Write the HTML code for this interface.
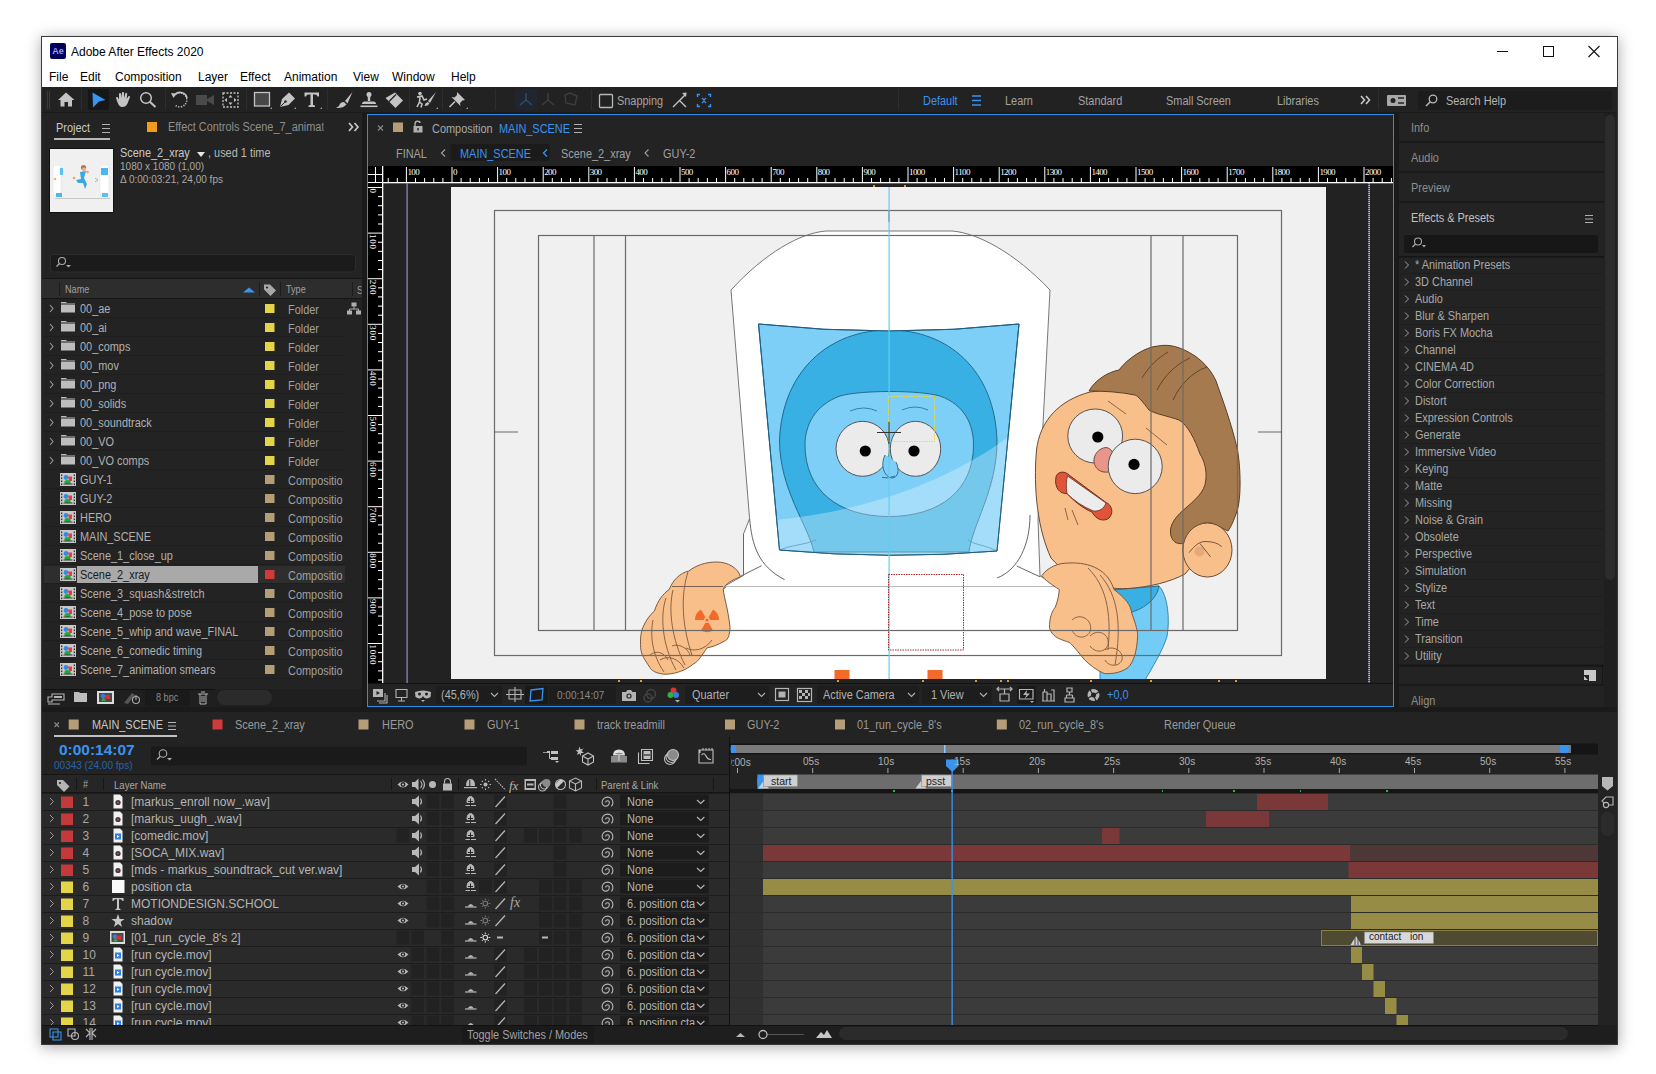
<!DOCTYPE html>
<html><head><meta charset="utf-8">
<style>
*{box-sizing:border-box;margin:0;padding:0}
html,body{width:1656px;height:1074px;overflow:hidden;background:#fff;font-family:"Liberation Sans",sans-serif}
.a{position:absolute}
.t{position:absolute;white-space:nowrap;font-size:11px;color:#a3a3a3;line-height:1;transform:scaleX(.91);transform-origin:0 0}
.n{transform:none}
#win{position:absolute;left:41px;top:36px;width:1577px;height:1009px;background:#1a1a1a;box-shadow:0 2px 14px rgba(0,0,0,.35);border:1px solid #3a3a3a}
.menu span{position:absolute;top:70px;font-size:12px;color:#000}
.pan{position:absolute;background:#232323}
</style></head><body>
<div id="win"></div>
<!-- title bar -->
<div class="a" style="left:42px;top:37px;width:1575px;height:50px;background:#fff"></div>
<div class="a" style="left:50px;top:43px;width:16px;height:16px;background:#00005b;border-radius:2px;color:#9a9aff;font-size:9px;font-weight:bold;line-height:16px;text-align:center">Ae</div>
<div class="t n" style="left:71px;top:46px;font-size:12px;color:#000">Adobe After Effects 2020</div>
<svg class="a" style="left:1480px;top:40px" width="130" height="24">
<path d="M17 11.5 H28" stroke="#111" stroke-width="1"/>
<rect x="63.5" y="6.5" width="10" height="10" fill="none" stroke="#111" stroke-width="1"/>
<path d="M108.5 6 L119.5 17 M119.5 6 L108.5 17" stroke="#111" stroke-width="1.1"/>
</svg>
<div class="menu">
<span style="left:49px">File</span><span style="left:80px">Edit</span><span style="left:115px">Composition</span><span style="left:198px">Layer</span><span style="left:240px">Effect</span><span style="left:284px">Animation</span><span style="left:353px">View</span><span style="left:392px">Window</span><span style="left:451px">Help</span>
</div>
<!-- toolbar -->
<div class="a" style="left:42px;top:87px;width:1575px;height:25px;background:#222"></div>
<svg class="a" style="left:42px;top:87px" width="1575" height="25" viewBox="42 87 1575 25">
<g fill="#3a3a3a"><rect x="47" y="91" width="1" height="18"/><rect x="49" y="91" width="1" height="18"/></g>
<g fill="#2e2e2e"><rect x="81" y="89" width="1" height="21"/><rect x="165" y="89" width="1" height="21"/><rect x="246" y="89" width="1" height="21"/><rect x="327" y="89" width="1" height="21"/><rect x="409" y="89" width="1" height="21"/><rect x="442" y="89" width="1" height="21"/><rect x="495" y="89" width="1" height="21"/><rect x="591" y="89" width="1" height="21"/><rect x="898" y="89" width="1" height="21"/><rect x="1378" y="89" width="1" height="21"/></g>
<!-- home -->
<path d="M58 100 L66 92.5 L74.5 100 L72 100 L72 106.5 L68 106.5 L68 102 L64.5 102 L64.5 106.5 L60.5 106.5 L60.5 100 Z" fill="#c4c4c4"/>
<!-- selection -->
<rect x="88" y="89" width="21" height="21" fill="#171717"/>
<path d="M92.5 92.5 L105.5 100 L99 101.5 L93 107.5 Z" fill="#3a93f0"/>
<!-- hand -->
<path d="M117 101 L116 98 Q116 96.5 117.5 97 L119 99.5 L119 93.5 Q120 92.3 121 93.5 L121.5 98 L122 92.3 Q123.2 91.5 124 92.5 L124.2 98 L125.5 93 Q126.7 92.5 127.2 93.5 L126.7 99 L128.5 96 Q130 95.8 130 97 L127.5 103.5 Q126 107 122 107 Q119 107 117 101 Z" fill="#c4c4c4"/>
<!-- zoom -->
<circle cx="146" cy="98" r="5.3" fill="none" stroke="#c4c4c4" stroke-width="1.5"/><path d="M149.8 101.8 L155.5 107" stroke="#c4c4c4" stroke-width="2"/>
<!-- rotate -->
<path d="M174 96 A7 7 0 1 1 175 105" fill="none" stroke="#c4c4c4" stroke-width="1.4" stroke-dasharray="1.3 1.3"/><path d="M174 96 A7 7 0 0 1 187 98" fill="none" stroke="#c4c4c4" stroke-width="1.6"/><path d="M171 93 L175.5 93.5 L173.5 98 Z" fill="#c4c4c4"/>
<!-- camera dim -->
<rect x="196" y="95" width="11" height="10" fill="#4a4a4a"/><path d="M207 99 L214 95 L214 105 L207 101Z" fill="#4a4a4a"/>
<!-- pan behind -->
<rect x="223" y="93" width="15" height="14" fill="none" stroke="#c4c4c4" stroke-width="1.3" stroke-dasharray="2 1.5"/><path d="M230.5 95 L228.5 97.5 L232.5 97.5Z M230.5 105 L228.5 102.5 L232.5 102.5Z M224.5 100 L227 98 L227 102Z M236.5 100 L234 98 L234 102Z" fill="#c4c4c4"/>
<!-- rect -->
<rect x="254.5" y="92.5" width="15" height="13.5" fill="#474747" stroke="#c4c4c4" stroke-width="1.3"/><path d="M270 109 L272 107 L272 109Z" fill="#999"/>
<!-- pen -->
<path d="M280 107 L282 99 L289 92.5 L295 98.5 L288.5 105 Z" fill="#c4c4c4"/><path d="M280.5 106.5 L285 102" stroke="#222" stroke-width="1"/><circle cx="285.5" cy="101.5" r="1.2" fill="#222"/><path d="M294 109 L296 107 L296 109Z" fill="#999"/>
<!-- T -->
<path d="M304.5 92.5 H319 V96.5 H317.5 Q317 94.5 315 94.5 H313 V105 L315 105.6 V107 H308.5 V105.6 L310.5 105 V94.5 H308.5 Q306.5 94.5 306 96.5 H304.5 Z" fill="#c4c4c4"/><path d="M320 109 L322 107 L322 109Z" fill="#999"/>
<!-- brush -->
<path d="M352.5 92 L345 101 L347.5 103.5 Z" fill="#c4c4c4"/><path d="M344 102 Q340 102 339 106 L336 108 Q343 108.5 346.5 104.5 Z" fill="#c4c4c4"/>
<!-- stamp -->
<circle cx="369" cy="94.5" r="2.5" fill="#c4c4c4"/><rect x="367.8" y="96" width="2.4" height="5" fill="#c4c4c4"/><path d="M362 104 Q362 101.5 364.5 101.5 H373.5 Q376 101.5 376 104 Z" fill="#c4c4c4"/><rect x="360.5" y="105.5" width="17" height="1.6" fill="#c4c4c4"/>
<!-- eraser -->
<path d="M395 92.5 L403 100.5 L395.5 108 L385.5 98 Z" fill="#c4c4c4"/><path d="M389 101.5 L396 94.5" stroke="#222" stroke-width="1.2"/>
<!-- roto -->
<circle cx="420" cy="93.5" r="1.8" fill="#c4c4c4"/><path d="M417 97 L422 96 L424 100 L427 99 M420 97 L419.5 102 L417 107 M419.5 102 L422 104 L421 107.5" stroke="#c4c4c4" stroke-width="1.6" fill="none"/><path d="M436 92 L428 101 L430 103Z M427.5 102 Q425 103 424.5 106 Q428 106 429.5 103.5Z" fill="#c4c4c4"/><path d="M436 109 L438 107 L438 109Z" fill="#999"/>
<!-- pin -->
<path d="M457 92 L465 100 L462.5 100.5 L460 103 L460.5 106 L451.5 97 L454.5 97.5 L457 95 Z" fill="#c4c4c4"/><path d="M455 101.5 L449.5 107" stroke="#c4c4c4" stroke-width="1.6"/><path d="M466 109 L468 107 L468 109Z" fill="#999"/>
<!-- dim icons -->
<rect x="515" y="89" width="22" height="21" fill="#1f2630"/>
<path d="M526 93 V100 M520 105 L526 100 L532 105" stroke="#2e4a66" stroke-width="1.6" fill="none"/>
<path d="M548 93 V100 M542 105 L548 100 L554 105" stroke="#3d3d3d" stroke-width="1.6" fill="none"/>
<path d="M565 95 L570 93 L577 96 L575 105 L566 103 Z" stroke="#3d3d3d" stroke-width="1.4" fill="none"/>
<!-- snapping -->
<rect x="599.5" y="94.5" width="13" height="13" fill="none" stroke="#b8b8b8" stroke-width="1.3" rx="1"/>
<path d="M673 107 L679.5 100.5 L686 107" stroke="#c4c4c4" stroke-width="1.4" fill="none"/><path d="M680 100 L686 94" stroke="#c4c4c4" stroke-width="1.4"/><path d="M682 93 L686.5 92.5 L686 97 Z" fill="#c4c4c4"/>
<path d="M697.5 97 V94.5 H700 M708 94.5 H710.5 V97 M710.5 104 V106.5 H708 M700 106.5 H697.5 V104" stroke="#3a93f0" stroke-width="1.4" fill="none"/><path d="M702 98 L704 100 L706 98 M702 103 L704 101 L706 103" stroke="#3a93f0" stroke-width="1.2" fill="none"/>
<!-- workspace -->
<path d="M972 96 H981 M972 100.5 H981 M972 105 H981" stroke="#3a93f0" stroke-width="1.4"/>
<path d="M1361 96 L1364.5 100 L1361 104 M1366 96 L1369.5 100 L1366 104" stroke="#c8c8c8" stroke-width="1.6" fill="none"/>
<rect x="1387" y="95" width="19" height="11" fill="#a8a8a8" rx="1"/><circle cx="1393" cy="100.5" r="2.5" fill="#222"/><path d="M1398 98 H1404 M1398 103 H1404" stroke="#222" stroke-width="1.3"/>
<rect x="1418" y="91" width="194" height="19" fill="#1c1c1c" rx="2"/>
<circle cx="1433" cy="99" r="3.8" fill="none" stroke="#b8b8b8" stroke-width="1.3"/><path d="M1430.3 101.8 L1426 106" stroke="#b8b8b8" stroke-width="1.5"/>
</svg>
<div class="t" style="left:617px;top:95px;font-size:12px;color:#a3a3a3">Snapping</div>
<div class="t" style="left:923px;top:95px;font-size:12px;color:#3a93f0">Default</div>
<div class="t" style="left:1005px;top:95px;font-size:12px;color:#a3a3a3">Learn</div>
<div class="t" style="left:1078px;top:95px;font-size:12px;color:#a3a3a3">Standard</div>
<div class="t" style="left:1166px;top:95px;font-size:12px;color:#a3a3a3">Small Screen</div>
<div class="t" style="left:1277px;top:95px;font-size:12px;color:#a3a3a3">Libraries</div>
<div class="t" style="left:1446px;top:95px;font-size:12px;color:#b3b3b3">Search Help</div>
<!-- project panel -->
<div class="pan" style="left:42px;top:113px;width:320px;height:594px"></div>
<div class="a" style="left:44px;top:566px;width:301px;height:18px;background:#2e2e2e"></div>
<div class="a" style="left:77px;top:566px;width:181px;height:18px;background:#a9a9a9"></div>
<div class="t" style="left:56px;top:122px;font-size:12px;color:#c8c8c8">Project</div>
<div class="a" style="left:54px;top:138px;width:56px;height:2px;background:#b8b8b8"></div>
<svg class="a" style="left:0;top:0" width="400" height="720">
<path d="M102 124.5 H110 M102 128.5 H110 M102 132.5 H110" stroke="#b0b0b0" stroke-width="1.2"/>
<rect x="147" y="122" width="10" height="10" fill="#f29b1d"/>
<path d="M349 123 L352.5 127 L349 131 M354.5 123 L358 127 L354.5 131" stroke="#c8c8c8" stroke-width="1.7" fill="none"/>
<rect x="49.5" y="148.5" width="64" height="64" fill="#000"/>
<rect x="50" y="149" width="63" height="63" fill="#f0f0f0"/>
<g>
<rect x="53" y="165" width="8" height="31" rx="3" fill="#fff" stroke="#ddd" stroke-width=".5"/>
<rect x="60" y="168" width="3" height="7" fill="#5cc0f0"/>
<rect x="56" y="193" width="6" height="4" fill="#4ab8f0"/>
<circle cx="55" cy="179" r="1.3" fill="#f0b090"/>
<circle cx="83.5" cy="167.5" r="2.6" fill="#b07a50"/><circle cx="84" cy="169.5" r="2" fill="#f0b090"/>
<path d="M80 172 L86 171 L84 178 L87 184 L85 189 L83 183 L78 183 L76 180 L81 179 Z" fill="#3aa8e0"/>
<circle cx="87.5" cy="172" r="1.3" fill="#f0a070"/><circle cx="74" cy="178" r="1.3" fill="#f0a070"/>
<rect x="100" y="165" width="9" height="31" rx="3" fill="#fff" stroke="#ddd" stroke-width=".5"/>
<rect x="101" y="168" width="7" height="7" fill="#4ab8f0"/>
<rect x="102" y="193" width="6" height="4" fill="#5cc0f0"/>
<path d="M95 178 L98 180 L95 182" stroke="#999" stroke-width=".7" fill="none"/>
<rect x="55" y="198" width="55" height="1" fill="#c8c8c8"/>
</g>
<path d="M197 152 H205 L201 157 Z" fill="#e8e8e8"/>
<rect x="50.5" y="254.5" width="305" height="17.5" rx="3" fill="#1b1b1b" stroke="#2c2c2c" stroke-width="1"/>
<circle cx="62" cy="261" r="3.5" fill="none" stroke="#aaa" stroke-width="1.1"/><path d="M59.5 263.5 L56.5 266.5" stroke="#aaa" stroke-width="1.2"/><path d="M66 265 H71 L68.5 267.5Z" fill="#aaa"/>
<rect x="42" y="278" width="320" height="1" fill="#151515"/><rect x="42" y="279" width="320" height="19" fill="#2d2d2d"/>
<rect x="42" y="298" width="320" height="1" fill="#151515"/>
<g fill="#1c1c1c"><rect x="59" y="282" width="1" height="14"/><rect x="259" y="282" width="1" height="14"/><rect x="280" y="282" width="1" height="14"/><rect x="352" y="282" width="1" height="14"/></g>
<path d="M243 292.5 L249 287.5 L255 292.5 Z" fill="#3a93f0"/>
<path d="M264 284.5 H270 L276 290.5 L270.5 296 L264 289.5 Z" fill="#a8a8a8"/><circle cx="267" cy="287.5" r="1.1" fill="#282828"/>
<rect x="351.5" y="302.5" width="5" height="4" fill="#b0b0b0"/><path d="M354 306.5 V309 M349.5 311 V309 H358.5 V311" stroke="#b0b0b0" stroke-width="1" fill="none"/><rect x="347" y="310.5" width="5" height="4" fill="#b0b0b0"/><rect x="356" y="310.5" width="5" height="4" fill="#b0b0b0"/>
<path d="M50 305.0 L53 308.5 L50 312.0" stroke="#9a9a9a" stroke-width="1.1" fill="none"/>
<path d="M61 302.0 H66 L67 303.0 H75 V312.5 H61 Z" fill="#bdbdbd"/><rect x="61" y="303.5" width="14" height="1" fill="#232323"/>
<rect x="265" y="304.0" width="9.5" height="9" fill="#e3d44a"/>
<path d="M50 324.0 L53 327.5 L50 331.0" stroke="#9a9a9a" stroke-width="1.1" fill="none"/>
<path d="M61 321.0 H66 L67 322.0 H75 V331.5 H61 Z" fill="#bdbdbd"/><rect x="61" y="322.5" width="14" height="1" fill="#232323"/>
<rect x="265" y="323.0" width="9.5" height="9" fill="#e3d44a"/>
<path d="M50 343.0 L53 346.5 L50 350.0" stroke="#9a9a9a" stroke-width="1.1" fill="none"/>
<path d="M61 340.0 H66 L67 341.0 H75 V350.5 H61 Z" fill="#bdbdbd"/><rect x="61" y="341.5" width="14" height="1" fill="#232323"/>
<rect x="265" y="342.0" width="9.5" height="9" fill="#e3d44a"/>
<path d="M50 362.0 L53 365.5 L50 369.0" stroke="#9a9a9a" stroke-width="1.1" fill="none"/>
<path d="M61 359.0 H66 L67 360.0 H75 V369.5 H61 Z" fill="#bdbdbd"/><rect x="61" y="360.5" width="14" height="1" fill="#232323"/>
<rect x="265" y="361.0" width="9.5" height="9" fill="#e3d44a"/>
<path d="M50 381.0 L53 384.5 L50 388.0" stroke="#9a9a9a" stroke-width="1.1" fill="none"/>
<path d="M61 378.0 H66 L67 379.0 H75 V388.5 H61 Z" fill="#bdbdbd"/><rect x="61" y="379.5" width="14" height="1" fill="#232323"/>
<rect x="265" y="380.0" width="9.5" height="9" fill="#e3d44a"/>
<path d="M50 400.0 L53 403.5 L50 407.0" stroke="#9a9a9a" stroke-width="1.1" fill="none"/>
<path d="M61 397.0 H66 L67 398.0 H75 V407.5 H61 Z" fill="#bdbdbd"/><rect x="61" y="398.5" width="14" height="1" fill="#232323"/>
<rect x="265" y="399.0" width="9.5" height="9" fill="#e3d44a"/>
<path d="M50 419.0 L53 422.5 L50 426.0" stroke="#9a9a9a" stroke-width="1.1" fill="none"/>
<path d="M61 416.0 H66 L67 417.0 H75 V426.5 H61 Z" fill="#bdbdbd"/><rect x="61" y="417.5" width="14" height="1" fill="#232323"/>
<rect x="265" y="418.0" width="9.5" height="9" fill="#e3d44a"/>
<path d="M50 438.0 L53 441.5 L50 445.0" stroke="#9a9a9a" stroke-width="1.1" fill="none"/>
<path d="M61 435.0 H66 L67 436.0 H75 V445.5 H61 Z" fill="#bdbdbd"/><rect x="61" y="436.5" width="14" height="1" fill="#232323"/>
<rect x="265" y="437.0" width="9.5" height="9" fill="#e3d44a"/>
<path d="M50 457.0 L53 460.5 L50 464.0" stroke="#9a9a9a" stroke-width="1.1" fill="none"/>
<path d="M61 454.0 H66 L67 455.0 H75 V464.5 H61 Z" fill="#bdbdbd"/><rect x="61" y="455.5" width="14" height="1" fill="#232323"/>
<rect x="265" y="456.0" width="9.5" height="9" fill="#e3d44a"/>
<rect x="60" y="473.0" width="16" height="13" fill="#c8c8c8"/><rect x="61" y="474.5" width="1.3" height="1.6" fill="#333"/><rect x="73.7" y="474.5" width="1.3" height="1.6" fill="#333"/><rect x="61" y="477.5" width="1.3" height="1.6" fill="#333"/><rect x="73.7" y="477.5" width="1.3" height="1.6" fill="#333"/><rect x="61" y="480.5" width="1.3" height="1.6" fill="#333"/><rect x="73.7" y="480.5" width="1.3" height="1.6" fill="#333"/><rect x="61" y="483.5" width="1.3" height="1.6" fill="#333"/><rect x="73.7" y="483.5" width="1.3" height="1.6" fill="#333"/><circle cx="66" cy="477.5" r="2.4" fill="#2f8ce8"/><path d="M68 476.5 H72 V481.0 L69 481.0Z" fill="#e83a4a"/><ellipse cx="67.5" cy="482.0" rx="3.2" ry="2" fill="#1fa83a"/><rect x="63.5" y="483.5" width="9" height="1" fill="#333"/>
<rect x="265" y="475.0" width="9.5" height="9" fill="#b59e77"/>
<rect x="60" y="492.0" width="16" height="13" fill="#c8c8c8"/><rect x="61" y="493.5" width="1.3" height="1.6" fill="#333"/><rect x="73.7" y="493.5" width="1.3" height="1.6" fill="#333"/><rect x="61" y="496.5" width="1.3" height="1.6" fill="#333"/><rect x="73.7" y="496.5" width="1.3" height="1.6" fill="#333"/><rect x="61" y="499.5" width="1.3" height="1.6" fill="#333"/><rect x="73.7" y="499.5" width="1.3" height="1.6" fill="#333"/><rect x="61" y="502.5" width="1.3" height="1.6" fill="#333"/><rect x="73.7" y="502.5" width="1.3" height="1.6" fill="#333"/><circle cx="66" cy="496.5" r="2.4" fill="#2f8ce8"/><path d="M68 495.5 H72 V500.0 L69 500.0Z" fill="#e83a4a"/><ellipse cx="67.5" cy="501.0" rx="3.2" ry="2" fill="#1fa83a"/><rect x="63.5" y="502.5" width="9" height="1" fill="#333"/>
<rect x="265" y="494.0" width="9.5" height="9" fill="#b59e77"/>
<rect x="60" y="511.0" width="16" height="13" fill="#c8c8c8"/><rect x="61" y="512.5" width="1.3" height="1.6" fill="#333"/><rect x="73.7" y="512.5" width="1.3" height="1.6" fill="#333"/><rect x="61" y="515.5" width="1.3" height="1.6" fill="#333"/><rect x="73.7" y="515.5" width="1.3" height="1.6" fill="#333"/><rect x="61" y="518.5" width="1.3" height="1.6" fill="#333"/><rect x="73.7" y="518.5" width="1.3" height="1.6" fill="#333"/><rect x="61" y="521.5" width="1.3" height="1.6" fill="#333"/><rect x="73.7" y="521.5" width="1.3" height="1.6" fill="#333"/><circle cx="66" cy="515.5" r="2.4" fill="#2f8ce8"/><path d="M68 514.5 H72 V519.0 L69 519.0Z" fill="#e83a4a"/><ellipse cx="67.5" cy="520.0" rx="3.2" ry="2" fill="#1fa83a"/><rect x="63.5" y="521.5" width="9" height="1" fill="#333"/>
<rect x="265" y="513.0" width="9.5" height="9" fill="#b59e77"/>
<rect x="60" y="530.0" width="16" height="13" fill="#c8c8c8"/><rect x="61" y="531.5" width="1.3" height="1.6" fill="#333"/><rect x="73.7" y="531.5" width="1.3" height="1.6" fill="#333"/><rect x="61" y="534.5" width="1.3" height="1.6" fill="#333"/><rect x="73.7" y="534.5" width="1.3" height="1.6" fill="#333"/><rect x="61" y="537.5" width="1.3" height="1.6" fill="#333"/><rect x="73.7" y="537.5" width="1.3" height="1.6" fill="#333"/><rect x="61" y="540.5" width="1.3" height="1.6" fill="#333"/><rect x="73.7" y="540.5" width="1.3" height="1.6" fill="#333"/><circle cx="66" cy="534.5" r="2.4" fill="#2f8ce8"/><path d="M68 533.5 H72 V538.0 L69 538.0Z" fill="#e83a4a"/><ellipse cx="67.5" cy="539.0" rx="3.2" ry="2" fill="#1fa83a"/><rect x="63.5" y="540.5" width="9" height="1" fill="#333"/>
<rect x="265" y="532.0" width="9.5" height="9" fill="#b59e77"/>
<rect x="60" y="549.0" width="16" height="13" fill="#c8c8c8"/><rect x="61" y="550.5" width="1.3" height="1.6" fill="#333"/><rect x="73.7" y="550.5" width="1.3" height="1.6" fill="#333"/><rect x="61" y="553.5" width="1.3" height="1.6" fill="#333"/><rect x="73.7" y="553.5" width="1.3" height="1.6" fill="#333"/><rect x="61" y="556.5" width="1.3" height="1.6" fill="#333"/><rect x="73.7" y="556.5" width="1.3" height="1.6" fill="#333"/><rect x="61" y="559.5" width="1.3" height="1.6" fill="#333"/><rect x="73.7" y="559.5" width="1.3" height="1.6" fill="#333"/><circle cx="66" cy="553.5" r="2.4" fill="#2f8ce8"/><path d="M68 552.5 H72 V557.0 L69 557.0Z" fill="#e83a4a"/><ellipse cx="67.5" cy="558.0" rx="3.2" ry="2" fill="#1fa83a"/><rect x="63.5" y="559.5" width="9" height="1" fill="#333"/>
<rect x="265" y="551.0" width="9.5" height="9" fill="#b59e77"/>
<rect x="60" y="568.0" width="16" height="13" fill="#c8c8c8"/><rect x="61" y="569.5" width="1.3" height="1.6" fill="#333"/><rect x="73.7" y="569.5" width="1.3" height="1.6" fill="#333"/><rect x="61" y="572.5" width="1.3" height="1.6" fill="#333"/><rect x="73.7" y="572.5" width="1.3" height="1.6" fill="#333"/><rect x="61" y="575.5" width="1.3" height="1.6" fill="#333"/><rect x="73.7" y="575.5" width="1.3" height="1.6" fill="#333"/><rect x="61" y="578.5" width="1.3" height="1.6" fill="#333"/><rect x="73.7" y="578.5" width="1.3" height="1.6" fill="#333"/><circle cx="66" cy="572.5" r="2.4" fill="#2f8ce8"/><path d="M68 571.5 H72 V576.0 L69 576.0Z" fill="#e83a4a"/><ellipse cx="67.5" cy="577.0" rx="3.2" ry="2" fill="#1fa83a"/><rect x="63.5" y="578.5" width="9" height="1" fill="#333"/>
<rect x="265" y="570.0" width="9.5" height="9" fill="#d03a3a"/>
<rect x="60" y="587.0" width="16" height="13" fill="#c8c8c8"/><rect x="61" y="588.5" width="1.3" height="1.6" fill="#333"/><rect x="73.7" y="588.5" width="1.3" height="1.6" fill="#333"/><rect x="61" y="591.5" width="1.3" height="1.6" fill="#333"/><rect x="73.7" y="591.5" width="1.3" height="1.6" fill="#333"/><rect x="61" y="594.5" width="1.3" height="1.6" fill="#333"/><rect x="73.7" y="594.5" width="1.3" height="1.6" fill="#333"/><rect x="61" y="597.5" width="1.3" height="1.6" fill="#333"/><rect x="73.7" y="597.5" width="1.3" height="1.6" fill="#333"/><circle cx="66" cy="591.5" r="2.4" fill="#2f8ce8"/><path d="M68 590.5 H72 V595.0 L69 595.0Z" fill="#e83a4a"/><ellipse cx="67.5" cy="596.0" rx="3.2" ry="2" fill="#1fa83a"/><rect x="63.5" y="597.5" width="9" height="1" fill="#333"/>
<rect x="265" y="589.0" width="9.5" height="9" fill="#b59e77"/>
<rect x="60" y="606.0" width="16" height="13" fill="#c8c8c8"/><rect x="61" y="607.5" width="1.3" height="1.6" fill="#333"/><rect x="73.7" y="607.5" width="1.3" height="1.6" fill="#333"/><rect x="61" y="610.5" width="1.3" height="1.6" fill="#333"/><rect x="73.7" y="610.5" width="1.3" height="1.6" fill="#333"/><rect x="61" y="613.5" width="1.3" height="1.6" fill="#333"/><rect x="73.7" y="613.5" width="1.3" height="1.6" fill="#333"/><rect x="61" y="616.5" width="1.3" height="1.6" fill="#333"/><rect x="73.7" y="616.5" width="1.3" height="1.6" fill="#333"/><circle cx="66" cy="610.5" r="2.4" fill="#2f8ce8"/><path d="M68 609.5 H72 V614.0 L69 614.0Z" fill="#e83a4a"/><ellipse cx="67.5" cy="615.0" rx="3.2" ry="2" fill="#1fa83a"/><rect x="63.5" y="616.5" width="9" height="1" fill="#333"/>
<rect x="265" y="608.0" width="9.5" height="9" fill="#b59e77"/>
<rect x="60" y="625.0" width="16" height="13" fill="#c8c8c8"/><rect x="61" y="626.5" width="1.3" height="1.6" fill="#333"/><rect x="73.7" y="626.5" width="1.3" height="1.6" fill="#333"/><rect x="61" y="629.5" width="1.3" height="1.6" fill="#333"/><rect x="73.7" y="629.5" width="1.3" height="1.6" fill="#333"/><rect x="61" y="632.5" width="1.3" height="1.6" fill="#333"/><rect x="73.7" y="632.5" width="1.3" height="1.6" fill="#333"/><rect x="61" y="635.5" width="1.3" height="1.6" fill="#333"/><rect x="73.7" y="635.5" width="1.3" height="1.6" fill="#333"/><circle cx="66" cy="629.5" r="2.4" fill="#2f8ce8"/><path d="M68 628.5 H72 V633.0 L69 633.0Z" fill="#e83a4a"/><ellipse cx="67.5" cy="634.0" rx="3.2" ry="2" fill="#1fa83a"/><rect x="63.5" y="635.5" width="9" height="1" fill="#333"/>
<rect x="265" y="627.0" width="9.5" height="9" fill="#b59e77"/>
<rect x="60" y="644.0" width="16" height="13" fill="#c8c8c8"/><rect x="61" y="645.5" width="1.3" height="1.6" fill="#333"/><rect x="73.7" y="645.5" width="1.3" height="1.6" fill="#333"/><rect x="61" y="648.5" width="1.3" height="1.6" fill="#333"/><rect x="73.7" y="648.5" width="1.3" height="1.6" fill="#333"/><rect x="61" y="651.5" width="1.3" height="1.6" fill="#333"/><rect x="73.7" y="651.5" width="1.3" height="1.6" fill="#333"/><rect x="61" y="654.5" width="1.3" height="1.6" fill="#333"/><rect x="73.7" y="654.5" width="1.3" height="1.6" fill="#333"/><circle cx="66" cy="648.5" r="2.4" fill="#2f8ce8"/><path d="M68 647.5 H72 V652.0 L69 652.0Z" fill="#e83a4a"/><ellipse cx="67.5" cy="653.0" rx="3.2" ry="2" fill="#1fa83a"/><rect x="63.5" y="654.5" width="9" height="1" fill="#333"/>
<rect x="265" y="646.0" width="9.5" height="9" fill="#b59e77"/>
<rect x="60" y="663.0" width="16" height="13" fill="#c8c8c8"/><rect x="61" y="664.5" width="1.3" height="1.6" fill="#333"/><rect x="73.7" y="664.5" width="1.3" height="1.6" fill="#333"/><rect x="61" y="667.5" width="1.3" height="1.6" fill="#333"/><rect x="73.7" y="667.5" width="1.3" height="1.6" fill="#333"/><rect x="61" y="670.5" width="1.3" height="1.6" fill="#333"/><rect x="73.7" y="670.5" width="1.3" height="1.6" fill="#333"/><rect x="61" y="673.5" width="1.3" height="1.6" fill="#333"/><rect x="73.7" y="673.5" width="1.3" height="1.6" fill="#333"/><circle cx="66" cy="667.5" r="2.4" fill="#2f8ce8"/><path d="M68 666.5 H72 V671.0 L69 671.0Z" fill="#e83a4a"/><ellipse cx="67.5" cy="672.0" rx="3.2" ry="2" fill="#1fa83a"/><rect x="63.5" y="673.5" width="9" height="1" fill="#333"/>
<rect x="265" y="665.0" width="9.5" height="9" fill="#b59e77"/>
<rect x="42" y="689" width="320" height="18" fill="#1f1f1f"/>
<rect x="44" y="689" width="171" height="1" fill="#111"/>
<path d="M48 697 H52 V694 H64 V700 H52 V702 H48 Z M48 704 H60" stroke="#b4b4b4" stroke-width="1.1" fill="none"/><rect x="54" y="696" width="8" height="2" fill="#b4b4b4"/>
<path d="M74 692 H79 L80 693 H87 V702 H74 Z" fill="#bdbdbd"/>
<rect x="97" y="691" width="17" height="13" fill="#ddd"/><rect x="99" y="693" width="13" height="9" fill="#4a4a4a"/><circle cx="103" cy="696" r="2.3" fill="#3a7be0"/><rect x="105" y="695" width="5" height="4" fill="#d83030"/><path d="M101 701 L103.5 697 L106 701Z" fill="#2aa84a"/>
<path d="M124 703 L132 693 L135 695 L128 704Z" fill="#555"/><circle cx="136" cy="700" r="3.5" fill="none" stroke="#a8a8a8" stroke-width="1.1"/><path d="M136 695 V700" stroke="#a8a8a8" stroke-width="1.1"/>
<rect x="145" y="690" width="45" height="16" rx="2" fill="#1a1a1a"/>
<path d="M198 694 H208 M200 694 V704 H206 V694 M202 696 V702 M204 696 V702 M201 692 H205" stroke="#b4b4b4" stroke-width="1" fill="none"/>
<rect x="217" y="690" width="55" height="15" rx="7.5" fill="#2b2b2b"/>
</svg>
<div class="t" style="left:168px;top:122px;font-size:12px;color:#8e8e8e;width:171px;overflow:hidden;line-height:1.3;top:120px">Effect Controls Scene_7_animation smears</div>
<div class="t" style="left:120px;top:147px;font-size:12px;color:#c8c8c8">Scene_2_xray</div>
<div class="t" style="left:208px;top:147px;font-size:12px;color:#b8b8b8">, used 1 time</div>
<div class="t" style="left:120px;top:161px;font-size:11px;color:#a8a8a8">1080 x 1080 (1,00)</div>
<div class="t" style="left:120px;top:174px;font-size:11px;color:#a8a8a8">&Delta; 0:00:03:21, 24,00 fps</div>
<div class="t" style="left:65px;top:285px;font-size:10px;color:#a0a0a0">Name</div>
<div class="t" style="left:286px;top:285px;font-size:10px;color:#a0a0a0">Type</div><div class="t" style="left:357px;top:285px;font-size:10px;color:#a0a0a0;width:5px;overflow:hidden;line-height:1.2">S</div>
<div class="t" style="left:156px;top:693px;font-size:10px;color:#8a8a8a">8 bpc</div>
<div class="a" style="left:44px;top:317px;width:301px;height:1px;background:#1e1e1e"></div>
<div class="t" style="left:80px;top:303px;font-size:12px;color:#b0b0b0">00_ae</div>
<div class="t" style="left:288px;top:303px;font-size:12px;color:#a0a0a0;width:62px;overflow:hidden;line-height:1.2">Folder</div>
<div class="a" style="left:44px;top:336px;width:301px;height:1px;background:#1e1e1e"></div>
<div class="t" style="left:80px;top:322px;font-size:12px;color:#b0b0b0">00_ai</div>
<div class="t" style="left:288px;top:322px;font-size:12px;color:#a0a0a0;width:62px;overflow:hidden;line-height:1.2">Folder</div>
<div class="a" style="left:44px;top:355px;width:301px;height:1px;background:#1e1e1e"></div>
<div class="t" style="left:80px;top:341px;font-size:12px;color:#b0b0b0">00_comps</div>
<div class="t" style="left:288px;top:341px;font-size:12px;color:#a0a0a0;width:62px;overflow:hidden;line-height:1.2">Folder</div>
<div class="a" style="left:44px;top:374px;width:301px;height:1px;background:#1e1e1e"></div>
<div class="t" style="left:80px;top:360px;font-size:12px;color:#b0b0b0">00_mov</div>
<div class="t" style="left:288px;top:360px;font-size:12px;color:#a0a0a0;width:62px;overflow:hidden;line-height:1.2">Folder</div>
<div class="a" style="left:44px;top:393px;width:301px;height:1px;background:#1e1e1e"></div>
<div class="t" style="left:80px;top:379px;font-size:12px;color:#b0b0b0">00_png</div>
<div class="t" style="left:288px;top:379px;font-size:12px;color:#a0a0a0;width:62px;overflow:hidden;line-height:1.2">Folder</div>
<div class="a" style="left:44px;top:412px;width:301px;height:1px;background:#1e1e1e"></div>
<div class="t" style="left:80px;top:398px;font-size:12px;color:#b0b0b0">00_solids</div>
<div class="t" style="left:288px;top:398px;font-size:12px;color:#a0a0a0;width:62px;overflow:hidden;line-height:1.2">Folder</div>
<div class="a" style="left:44px;top:431px;width:301px;height:1px;background:#1e1e1e"></div>
<div class="t" style="left:80px;top:417px;font-size:12px;color:#b0b0b0">00_soundtrack</div>
<div class="t" style="left:288px;top:417px;font-size:12px;color:#a0a0a0;width:62px;overflow:hidden;line-height:1.2">Folder</div>
<div class="a" style="left:44px;top:450px;width:301px;height:1px;background:#1e1e1e"></div>
<div class="t" style="left:80px;top:436px;font-size:12px;color:#b0b0b0">00_VO</div>
<div class="t" style="left:288px;top:436px;font-size:12px;color:#a0a0a0;width:62px;overflow:hidden;line-height:1.2">Folder</div>
<div class="a" style="left:44px;top:469px;width:301px;height:1px;background:#1e1e1e"></div>
<div class="t" style="left:80px;top:455px;font-size:12px;color:#b0b0b0">00_VO comps</div>
<div class="t" style="left:288px;top:455px;font-size:12px;color:#a0a0a0;width:62px;overflow:hidden;line-height:1.2">Folder</div>
<div class="a" style="left:44px;top:488px;width:301px;height:1px;background:#1e1e1e"></div>
<div class="t" style="left:80px;top:474px;font-size:12px;color:#b0b0b0">GUY-1</div>
<div class="t" style="left:288px;top:474px;font-size:12px;color:#a0a0a0;width:62px;overflow:hidden;line-height:1.2">Compositio</div>
<div class="a" style="left:44px;top:507px;width:301px;height:1px;background:#1e1e1e"></div>
<div class="t" style="left:80px;top:493px;font-size:12px;color:#b0b0b0">GUY-2</div>
<div class="t" style="left:288px;top:493px;font-size:12px;color:#a0a0a0;width:62px;overflow:hidden;line-height:1.2">Compositio</div>
<div class="a" style="left:44px;top:526px;width:301px;height:1px;background:#1e1e1e"></div>
<div class="t" style="left:80px;top:512px;font-size:12px;color:#b0b0b0">HERO</div>
<div class="t" style="left:288px;top:512px;font-size:12px;color:#a0a0a0;width:62px;overflow:hidden;line-height:1.2">Compositio</div>
<div class="a" style="left:44px;top:545px;width:301px;height:1px;background:#1e1e1e"></div>
<div class="t" style="left:80px;top:531px;font-size:12px;color:#b0b0b0">MAIN_SCENE</div>
<div class="t" style="left:288px;top:531px;font-size:12px;color:#a0a0a0;width:62px;overflow:hidden;line-height:1.2">Compositio</div>
<div class="a" style="left:44px;top:564px;width:301px;height:1px;background:#1e1e1e"></div>
<div class="t" style="left:80px;top:550px;font-size:12px;color:#b0b0b0">Scene_1_close_up</div>
<div class="t" style="left:288px;top:550px;font-size:12px;color:#a0a0a0;width:62px;overflow:hidden;line-height:1.2">Compositio</div>
<div class="a" style="left:44px;top:583px;width:301px;height:1px;background:#1e1e1e"></div>
<div class="t" style="left:80px;top:569px;font-size:12px;color:#1a1a1a">Scene_2_xray</div>
<div class="t" style="left:288px;top:569px;font-size:12px;color:#a0a0a0;width:62px;overflow:hidden;line-height:1.2">Compositio</div>
<div class="a" style="left:44px;top:602px;width:301px;height:1px;background:#1e1e1e"></div>
<div class="t" style="left:80px;top:588px;font-size:12px;color:#b0b0b0">Scene_3_squash&amp;stretch</div>
<div class="t" style="left:288px;top:588px;font-size:12px;color:#a0a0a0;width:62px;overflow:hidden;line-height:1.2">Compositio</div>
<div class="a" style="left:44px;top:621px;width:301px;height:1px;background:#1e1e1e"></div>
<div class="t" style="left:80px;top:607px;font-size:12px;color:#b0b0b0">Scene_4_pose to pose</div>
<div class="t" style="left:288px;top:607px;font-size:12px;color:#a0a0a0;width:62px;overflow:hidden;line-height:1.2">Compositio</div>
<div class="a" style="left:44px;top:640px;width:301px;height:1px;background:#1e1e1e"></div>
<div class="t" style="left:80px;top:626px;font-size:12px;color:#b0b0b0">Scene_5_whip and wave_FINAL</div>
<div class="t" style="left:288px;top:626px;font-size:12px;color:#a0a0a0;width:62px;overflow:hidden;line-height:1.2">Compositio</div>
<div class="a" style="left:44px;top:659px;width:301px;height:1px;background:#1e1e1e"></div>
<div class="t" style="left:80px;top:645px;font-size:12px;color:#b0b0b0">Scene_6_comedic timing</div>
<div class="t" style="left:288px;top:645px;font-size:12px;color:#a0a0a0;width:62px;overflow:hidden;line-height:1.2">Compositio</div>
<div class="a" style="left:44px;top:678px;width:301px;height:1px;background:#1e1e1e"></div>
<div class="t" style="left:80px;top:664px;font-size:12px;color:#b0b0b0">Scene_7_animation smears</div>
<div class="t" style="left:288px;top:664px;font-size:12px;color:#a0a0a0;width:62px;overflow:hidden;line-height:1.2">Compositio</div>
<!-- comp panel -->
<div class="pan" style="left:367px;top:114px;width:1027px;height:593px;border:1px solid #2d8ceb"></div>
<div class="a" style="left:368px;top:183px;width:1025px;height:500px;background:#222"></div>
<svg class="a" style="left:0;top:0" width="1400" height="712">
<path d="M378 125.5 L383 130.5 M383 125.5 L378 130.5" stroke="#8a8a8a" stroke-width="1.1"/>
<rect x="393" y="122.5" width="10" height="9.5" fill="#b59e77"/>
<path d="M415 126 V124 Q415 121.3 417.5 121.3 Q420 121.3 420 123" stroke="#b0b0b0" stroke-width="1.4" fill="none"/><rect x="413.5" y="126" width="9" height="6.5" fill="#b0b0b0"/><rect x="417.3" y="128" width="1.4" height="2.5" fill="#232323"/>
<path d="M574 124.5 H582 M574 128.5 H582 M574 132.5 H582" stroke="#b0b0b0" stroke-width="1.2"/>
<path d="M445 149.5 L441.5 153 L445 156.5" stroke="#a0a0a0" stroke-width="1.1" fill="none"/>
<rect x="450.5" y="144" width="99" height="17" rx="2" fill="#1b1b1b"/>
<path d="M547 149.5 L543.5 153 L547 156.5" stroke="#3a93f0" stroke-width="1.3" fill="none"/>
<path d="M648.5 149.5 L645 153 L648.5 156.5" stroke="#a0a0a0" stroke-width="1.1" fill="none"/>
<rect x="368" y="166" width="1025" height="17" fill="#000"/>
<rect x="368" y="182" width="1025" height="1.3" fill="#fff"/>
<rect x="368" y="183" width="15" height="500" fill="#000"/>
<rect x="382" y="166" width="1.3" height="517" fill="#fff"/>
<g fill="#fff">
<rect x="368" y="174" width="14" height="1"/><rect x="375" y="167" width="1" height="15"/>
<rect x="387.7" y="178" width="1" height="4"/>
<rect x="396.8" y="178" width="1" height="4"/>
<rect x="405.9" y="167" width="1" height="15"/>
<rect x="415.0" y="178" width="1" height="4"/>
<rect x="424.1" y="178" width="1" height="4"/>
<rect x="433.3" y="178" width="1" height="4"/>
<rect x="442.4" y="178" width="1" height="4"/>
<rect x="451.5" y="167" width="1" height="15"/>
<rect x="460.6" y="178" width="1" height="4"/>
<rect x="469.7" y="178" width="1" height="4"/>
<rect x="478.9" y="178" width="1" height="4"/>
<rect x="488.0" y="178" width="1" height="4"/>
<rect x="497.1" y="167" width="1" height="15"/>
<rect x="506.2" y="178" width="1" height="4"/>
<rect x="515.3" y="178" width="1" height="4"/>
<rect x="524.5" y="178" width="1" height="4"/>
<rect x="533.6" y="178" width="1" height="4"/>
<rect x="542.7" y="167" width="1" height="15"/>
<rect x="551.8" y="178" width="1" height="4"/>
<rect x="560.9" y="178" width="1" height="4"/>
<rect x="570.1" y="178" width="1" height="4"/>
<rect x="579.2" y="178" width="1" height="4"/>
<rect x="588.3" y="167" width="1" height="15"/>
<rect x="597.4" y="178" width="1" height="4"/>
<rect x="606.5" y="178" width="1" height="4"/>
<rect x="615.7" y="178" width="1" height="4"/>
<rect x="624.8" y="178" width="1" height="4"/>
<rect x="633.9" y="167" width="1" height="15"/>
<rect x="643.0" y="178" width="1" height="4"/>
<rect x="652.1" y="178" width="1" height="4"/>
<rect x="661.3" y="178" width="1" height="4"/>
<rect x="670.4" y="178" width="1" height="4"/>
<rect x="679.5" y="167" width="1" height="15"/>
<rect x="688.6" y="178" width="1" height="4"/>
<rect x="697.7" y="178" width="1" height="4"/>
<rect x="706.9" y="178" width="1" height="4"/>
<rect x="716.0" y="178" width="1" height="4"/>
<rect x="725.1" y="167" width="1" height="15"/>
<rect x="734.2" y="178" width="1" height="4"/>
<rect x="743.3" y="178" width="1" height="4"/>
<rect x="752.5" y="178" width="1" height="4"/>
<rect x="761.6" y="178" width="1" height="4"/>
<rect x="770.7" y="167" width="1" height="15"/>
<rect x="779.8" y="178" width="1" height="4"/>
<rect x="788.9" y="178" width="1" height="4"/>
<rect x="798.1" y="178" width="1" height="4"/>
<rect x="807.2" y="178" width="1" height="4"/>
<rect x="816.3" y="167" width="1" height="15"/>
<rect x="825.4" y="178" width="1" height="4"/>
<rect x="834.5" y="178" width="1" height="4"/>
<rect x="843.7" y="178" width="1" height="4"/>
<rect x="852.8" y="178" width="1" height="4"/>
<rect x="861.9" y="167" width="1" height="15"/>
<rect x="871.0" y="178" width="1" height="4"/>
<rect x="880.1" y="178" width="1" height="4"/>
<rect x="889.3" y="178" width="1" height="4"/>
<rect x="898.4" y="178" width="1" height="4"/>
<rect x="907.5" y="167" width="1" height="15"/>
<rect x="916.6" y="178" width="1" height="4"/>
<rect x="925.7" y="178" width="1" height="4"/>
<rect x="934.9" y="178" width="1" height="4"/>
<rect x="944.0" y="178" width="1" height="4"/>
<rect x="953.1" y="167" width="1" height="15"/>
<rect x="962.2" y="178" width="1" height="4"/>
<rect x="971.3" y="178" width="1" height="4"/>
<rect x="980.5" y="178" width="1" height="4"/>
<rect x="989.6" y="178" width="1" height="4"/>
<rect x="998.7" y="167" width="1" height="15"/>
<rect x="1007.8" y="178" width="1" height="4"/>
<rect x="1016.9" y="178" width="1" height="4"/>
<rect x="1026.1" y="178" width="1" height="4"/>
<rect x="1035.2" y="178" width="1" height="4"/>
<rect x="1044.3" y="167" width="1" height="15"/>
<rect x="1053.4" y="178" width="1" height="4"/>
<rect x="1062.5" y="178" width="1" height="4"/>
<rect x="1071.7" y="178" width="1" height="4"/>
<rect x="1080.8" y="178" width="1" height="4"/>
<rect x="1089.9" y="167" width="1" height="15"/>
<rect x="1099.0" y="178" width="1" height="4"/>
<rect x="1108.1" y="178" width="1" height="4"/>
<rect x="1117.3" y="178" width="1" height="4"/>
<rect x="1126.4" y="178" width="1" height="4"/>
<rect x="1135.5" y="167" width="1" height="15"/>
<rect x="1144.6" y="178" width="1" height="4"/>
<rect x="1153.7" y="178" width="1" height="4"/>
<rect x="1162.9" y="178" width="1" height="4"/>
<rect x="1172.0" y="178" width="1" height="4"/>
<rect x="1181.1" y="167" width="1" height="15"/>
<rect x="1190.2" y="178" width="1" height="4"/>
<rect x="1199.3" y="178" width="1" height="4"/>
<rect x="1208.5" y="178" width="1" height="4"/>
<rect x="1217.6" y="178" width="1" height="4"/>
<rect x="1226.7" y="167" width="1" height="15"/>
<rect x="1235.8" y="178" width="1" height="4"/>
<rect x="1244.9" y="178" width="1" height="4"/>
<rect x="1254.1" y="178" width="1" height="4"/>
<rect x="1263.2" y="178" width="1" height="4"/>
<rect x="1272.3" y="167" width="1" height="15"/>
<rect x="1281.4" y="178" width="1" height="4"/>
<rect x="1290.5" y="178" width="1" height="4"/>
<rect x="1299.7" y="178" width="1" height="4"/>
<rect x="1308.8" y="178" width="1" height="4"/>
<rect x="1317.9" y="167" width="1" height="15"/>
<rect x="1327.0" y="178" width="1" height="4"/>
<rect x="1336.1" y="178" width="1" height="4"/>
<rect x="1345.3" y="178" width="1" height="4"/>
<rect x="1354.4" y="178" width="1" height="4"/>
<rect x="1363.5" y="167" width="1" height="15"/>
<rect x="1372.6" y="178" width="1" height="4"/>
<rect x="1381.7" y="178" width="1" height="4"/>
<rect x="1390.9" y="178" width="1" height="4"/>
<rect x="368" y="187.0" width="14" height="1"/>
<rect x="378" y="196.1" width="4" height="1"/>
<rect x="378" y="205.2" width="4" height="1"/>
<rect x="378" y="214.4" width="4" height="1"/>
<rect x="378" y="223.5" width="4" height="1"/>
<rect x="368" y="232.6" width="14" height="1"/>
<rect x="378" y="241.7" width="4" height="1"/>
<rect x="378" y="250.8" width="4" height="1"/>
<rect x="378" y="260.0" width="4" height="1"/>
<rect x="378" y="269.1" width="4" height="1"/>
<rect x="368" y="278.2" width="14" height="1"/>
<rect x="378" y="287.3" width="4" height="1"/>
<rect x="378" y="296.4" width="4" height="1"/>
<rect x="378" y="305.6" width="4" height="1"/>
<rect x="378" y="314.7" width="4" height="1"/>
<rect x="368" y="323.8" width="14" height="1"/>
<rect x="378" y="332.9" width="4" height="1"/>
<rect x="378" y="342.0" width="4" height="1"/>
<rect x="378" y="351.2" width="4" height="1"/>
<rect x="378" y="360.3" width="4" height="1"/>
<rect x="368" y="369.4" width="14" height="1"/>
<rect x="378" y="378.5" width="4" height="1"/>
<rect x="378" y="387.6" width="4" height="1"/>
<rect x="378" y="396.8" width="4" height="1"/>
<rect x="378" y="405.9" width="4" height="1"/>
<rect x="368" y="415.0" width="14" height="1"/>
<rect x="378" y="424.1" width="4" height="1"/>
<rect x="378" y="433.2" width="4" height="1"/>
<rect x="378" y="442.4" width="4" height="1"/>
<rect x="378" y="451.5" width="4" height="1"/>
<rect x="368" y="460.6" width="14" height="1"/>
<rect x="378" y="469.7" width="4" height="1"/>
<rect x="378" y="478.8" width="4" height="1"/>
<rect x="378" y="488.0" width="4" height="1"/>
<rect x="378" y="497.1" width="4" height="1"/>
<rect x="368" y="506.2" width="14" height="1"/>
<rect x="378" y="515.3" width="4" height="1"/>
<rect x="378" y="524.4" width="4" height="1"/>
<rect x="378" y="533.6" width="4" height="1"/>
<rect x="378" y="542.7" width="4" height="1"/>
<rect x="368" y="551.8" width="14" height="1"/>
<rect x="378" y="560.9" width="4" height="1"/>
<rect x="378" y="570.0" width="4" height="1"/>
<rect x="378" y="579.2" width="4" height="1"/>
<rect x="378" y="588.3" width="4" height="1"/>
<rect x="368" y="597.4" width="14" height="1"/>
<rect x="378" y="606.5" width="4" height="1"/>
<rect x="378" y="615.6" width="4" height="1"/>
<rect x="378" y="624.8" width="4" height="1"/>
<rect x="378" y="633.9" width="4" height="1"/>
<rect x="368" y="643.0" width="14" height="1"/>
<rect x="378" y="652.1" width="4" height="1"/>
<rect x="378" y="661.2" width="4" height="1"/>
<rect x="378" y="670.4" width="4" height="1"/>
<rect x="378" y="679.5" width="4" height="1"/>
</g>
<g fill="#fff" font-size="9" font-family="Liberation Serif" style="letter-spacing:-.6px">
<text x="407.4" y="174.5">100</text>
<text x="453.0" y="174.5">0</text>
<text x="498.6" y="174.5">100</text>
<text x="544.2" y="174.5">200</text>
<text x="589.8" y="174.5">300</text>
<text x="635.4" y="174.5">400</text>
<text x="681.0" y="174.5">500</text>
<text x="726.6" y="174.5">600</text>
<text x="772.2" y="174.5">700</text>
<text x="817.8" y="174.5">800</text>
<text x="863.4" y="174.5">900</text>
<text x="909.0" y="174.5">1000</text>
<text x="954.6" y="174.5">1100</text>
<text x="1000.2" y="174.5">1200</text>
<text x="1045.8" y="174.5">1300</text>
<text x="1091.4" y="174.5">1400</text>
<text x="1137.0" y="174.5">1500</text>
<text x="1182.6" y="174.5">1600</text>
<text x="1228.2" y="174.5">1700</text>
<text x="1273.8" y="174.5">1800</text>
<text x="1319.4" y="174.5">1900</text>
<text x="1365.0" y="174.5">2000</text>
<text x="370" y="194.0" transform="rotate(90 372.5 191.0)">0</text>
<text x="370" y="239.6" transform="rotate(90 372.5 236.6)">1</text>
<text x="370" y="244.8" transform="rotate(90 372.5 241.8)">0</text>
<text x="370" y="250.0" transform="rotate(90 372.5 247.0)">0</text>
<text x="370" y="285.2" transform="rotate(90 372.5 282.2)">2</text>
<text x="370" y="290.4" transform="rotate(90 372.5 287.4)">0</text>
<text x="370" y="295.6" transform="rotate(90 372.5 292.6)">0</text>
<text x="370" y="330.8" transform="rotate(90 372.5 327.8)">3</text>
<text x="370" y="336.0" transform="rotate(90 372.5 333.0)">0</text>
<text x="370" y="341.2" transform="rotate(90 372.5 338.2)">0</text>
<text x="370" y="376.4" transform="rotate(90 372.5 373.4)">4</text>
<text x="370" y="381.6" transform="rotate(90 372.5 378.6)">0</text>
<text x="370" y="386.8" transform="rotate(90 372.5 383.8)">0</text>
<text x="370" y="422.0" transform="rotate(90 372.5 419.0)">5</text>
<text x="370" y="427.2" transform="rotate(90 372.5 424.2)">0</text>
<text x="370" y="432.4" transform="rotate(90 372.5 429.4)">0</text>
<text x="370" y="467.6" transform="rotate(90 372.5 464.6)">6</text>
<text x="370" y="472.8" transform="rotate(90 372.5 469.8)">0</text>
<text x="370" y="478.0" transform="rotate(90 372.5 475.0)">0</text>
<text x="370" y="513.2" transform="rotate(90 372.5 510.2)">7</text>
<text x="370" y="518.4" transform="rotate(90 372.5 515.4)">0</text>
<text x="370" y="523.6" transform="rotate(90 372.5 520.6)">0</text>
<text x="370" y="558.8" transform="rotate(90 372.5 555.8)">8</text>
<text x="370" y="564.0" transform="rotate(90 372.5 561.0)">0</text>
<text x="370" y="569.2" transform="rotate(90 372.5 566.2)">0</text>
<text x="370" y="604.4" transform="rotate(90 372.5 601.4)">9</text>
<text x="370" y="609.6" transform="rotate(90 372.5 606.6)">0</text>
<text x="370" y="614.8" transform="rotate(90 372.5 611.8)">0</text>
<text x="370" y="650.0" transform="rotate(90 372.5 647.0)">1</text>
<text x="370" y="655.2" transform="rotate(90 372.5 652.2)">0</text>
<text x="370" y="660.4" transform="rotate(90 372.5 657.4)">0</text>
<text x="370" y="665.6" transform="rotate(90 372.5 662.6)">0</text>
</g>
<rect x="406.5" y="183" width="1.2" height="500" fill="#8f8fd0"/>
<rect x="1368.5" y="183" width="1.2" height="500" fill="#6a6a90"/><path d="M1369.1 183 V683" stroke="#e0e0f0" stroke-width="1.2" stroke-dasharray="1 1"/>
<rect x="451" y="187" width="875" height="492" fill="#f0f0f0"/>
<!-- CARTOON -->
<defs>
<clipPath id="cv"><rect x="451" y="187" width="875" height="492"/></clipPath>
<clipPath id="vis"><path d="M758.5 324 Q889 338 1019 324 L997 551 Q889 560 779.5 550 Z"/></clipPath>
</defs>
<g clip-path="url(#cv)">
<!-- body -->
<path d="M728 587 H1060 L1100 600 L1125 640 V690 H650 L700 640 L723 600 V592 Q723 587 728 587Z" fill="#fff"/><path d="M723 592 Q723 587 728 587 H1060" fill="none" stroke="#888" stroke-width="1"/>
<!-- helmet -->
<path d="M826 231 L952 231 C978 233 1015 253 1050 290 L1038 520 L1040 576 L1060 587 L723 587 L743.5 575.4 L743.5 534 L749.6 518.6 L731 290 C765 253 800 233 826 231 Z" fill="#fff" stroke="#777" stroke-width="1"/>
<path d="M726 588 H1058" stroke="#fff" stroke-width="2"/>
<g fill="none" stroke="#666" stroke-width="1">
<path d="M749.6 518.6 C752 545 758 566 784.6 579.6"/>
<path d="M1030 515 C1030 545 1018 570 997 578"/>
<path d="M740 576.6 L761.6 565.7"/><path d="M1016.7 566 L1040 576.8"/>
<path d="M743.5 534 V575"/>
</g>
<!-- visor -->
<path d="M758.5 324 Q889 338 1019 324 L997 551 Q889 560 779.5 550 Z" fill="#7dcff7" stroke="#1f5f80" stroke-width="1"/>
<g clip-path="url(#vis)">
<path d="M779.5 441 C782 370 830 330 889 330 C948 330 995 370 997 441 C997 490 972 525 969 552 L814 552 C808 525 780 490 779.5 441 Z" fill="#38b0e3" stroke="#1f6a90" stroke-width="1"/>
<path d="M840 396 C860 390 920 390 940 396 C965 405 973.5 425 973.5 445 C973.5 490 940 516.5 889 516.5 C838 516.5 805 490 805 445 C805 425 815 405 840 396 Z" fill="#7dcff7" stroke="#2a6a8a" stroke-width="1"/>
<path d="M760 521 C850 516 950 485 1020 428 L1020 570 L760 570 Z" fill="#fff" fill-opacity=".3"/>
<path d="M779.5 550 C790 545 805 545 816 540" stroke="#5aa0c0" stroke-width=".8" fill="none"/>
<path d="M997 551 C985 545 975 545 968 540" stroke="#5aa0c0" stroke-width=".8" fill="none"/>
</g>
<path d="M758.5 324 Q889 338 1019 324 L997 551 Q889 560 779.5 550 Z" fill="none" stroke="#1f5f80" stroke-width="1"/>
<!-- eyebrows -->
<path d="M850 411 Q864 405 877 411 M902 410 Q915 404 928 410" stroke="#3a7fa8" stroke-width="1" fill="none"/>
<!-- eyes -->
<ellipse cx="862.7" cy="448.8" rx="26.7" ry="27.5" fill="#ebebeb" stroke="#555" stroke-width="1"/>
<ellipse cx="915.5" cy="448.8" rx="25.2" ry="27.5" fill="#ebebeb" stroke="#555" stroke-width="1"/>
<path d="M885 455 C880 465 884 477 892 478 C898 478 900 470 896 462" fill="#7dcff7" stroke="#3a6f90" stroke-width="1"/>
<circle cx="865.3" cy="451" r="5.6" fill="#000"/>
<circle cx="914" cy="451" r="5.6" fill="#000"/>
<path d="M882 477.5 Q889 479 895 476" stroke="#3a6f90" stroke-width="1" fill="none"/>
<!-- left hand -->
<path d="M716.4 562 C728 562 738 568 740.5 576.7 C732 580 725 584 723.3 589.3 C724 598 728 608 730 627.2 C730 636 727 641 724.4 641 C718 645 712 647 707.2 647.8 C702 655 698 662 693.4 664 C686 670 676 674 666 674.2 C656 674 651 670 649.8 667.4 C645 660 641 655 640.7 647.8 C640 638 641 632 643 627.2 C646 620 650 615 654.4 611 C658 600 663 594 669.3 589.3 C673 580 680 573 688.8 571 C695 566 705 562 716.4 562Z" fill="#f9bf8a" stroke="#7a5a40" stroke-width="1"/>
<g fill="none" stroke="#7a5a40" stroke-width=".9">
<path d="M688 572 C682 590 680 620 692 655"/>
<path d="M673 590 C668 610 672 640 685 665"/>
<path d="M666 598 C660 615 662 645 676 670"/>
<path d="M653 620 C650 635 652 655 664 672"/>
<path d="M686 648 C694 652 705 650 712 640"/>
<path d="M660 660 C668 655 678 658 684 668"/>
<path d="M650 655 C656 650 664 652 668 660"/>
<path d="M672 646 C678 643 688 648 690 655"/>
</g>
<path d="M672 586.5 H723" stroke="#7a6050" stroke-width="1"/>
<g fill="#f26a2a"><path d="M704.0 620.0 L695.0 620.0 A12 12 0 0 1 701.0 609.6 L705.5 617.4 A3 3 0 0 0 704.0 620.0Z"/><path d="M708.5 617.4 L713.0 609.6 A12 12 0 0 1 719.0 620.0 L710.0 620.0 A3 3 0 0 0 708.5 617.4Z"/><path d="M708.5 622.6 L713.0 630.4 A12 12 0 0 1 701.0 630.4 L705.5 622.6 A3 3 0 0 0 708.5 622.6Z"/><circle cx="707" cy="620" r="1.6"/></g>
<rect x="834.5" y="670" width="15" height="10" fill="#f26a2a"/>
<rect x="927.5" y="670" width="15" height="10" fill="#f26a2a"/>
<!-- boy shirt -->
<path d="M1112 590 L1159 586 C1168 595 1170 620 1167 636.5 C1163 650 1152 668 1145 680 L1100 680 L1100 600 Z" fill="#72ccf6" stroke="#3a8ab0" stroke-width="1"/>
<path d="M1112 590 L1159 586 C1157 600 1142 610 1128 613 C1122 605 1116 598 1112 590Z" fill="#38b0e3" stroke="#2a7099" stroke-width="1"/>
<!-- boy face -->
<path d="M1090 392 C1060 400 1040 420 1036.5 450 C1033 490 1038 530 1051 558 C1070 580 1100 590 1128 588.5 C1150 587 1170 582 1185 574 L1222 530 L1236 450 L1215 400 C1190 385 1150 385 1090 392 Z" fill="#f9bf8a" stroke="#6a4a30" stroke-width="1"/>
<!-- hair -->
<path d="M1089 391 C1095 380 1108 372 1119 370 C1128 358 1145 347 1158 346 C1168 344 1180 346 1195 356 C1205 363 1212 372 1216 381 C1222 398 1232 425 1237.5 450 C1241 470 1241 500 1237 511 C1234 520 1231 527 1228 531 L1211.5 523 C1206 523 1203 523 1201 524 C1195 530 1188 543 1183.8 543.5 C1178 544 1173.6 543.5 1171 536 C1169 528 1172 520 1183.8 509.7 C1195 500 1205 492 1205.8 480 C1207 470 1204 460 1200 454 C1195 440 1188 425 1179 420 C1168 416 1155 414 1149 410 C1143 402 1138 396 1135 395 C1120 392 1105 391 1089 391Z" fill="#a67a4f" stroke="#5a3e25" stroke-width="1"/>
<g stroke="#5a3e25" stroke-width=".9" fill="none">
<path d="M1142 378 C1150 365 1158 358 1168 352"/><path d="M1157 390 C1165 375 1175 365 1190 358"/><path d="M1173 400 C1180 385 1192 372 1207 367"/>
</g>
<g stroke="#7a5a40" stroke-width=".9" fill="none">
<path d="M1108 401 L1126 414"/><path d="M1146 428 L1167 445"/><path d="M1065 508 L1068 520 M1072 510 L1078 525"/>
</g>
<!-- boy ear -->
<ellipse cx="1207.4" cy="550" rx="24.6" ry="27" fill="#f9bf8a" stroke="#6a4a30" stroke-width="1"/>
<circle cx="1199.5" cy="551.5" r="5" fill="#e8a878"/>
<path d="M1189 552.7 C1195 545 1200 541.5 1205 541.5 C1212 541.5 1218 543 1221.7 546.6 M1200 543.5 L1210.5 556.8" stroke="#6a4a30" stroke-width=".9" fill="none"/>
<!-- boy eyes -->
<ellipse cx="1095.2" cy="436" rx="27.4" ry="27" fill="#ebebeb" stroke="#555" stroke-width="1"/>
<circle cx="1097.8" cy="437" r="5.6" fill="#000"/>
<path d="M1106 447.5 C1099 448 1093 455 1094 462 C1095 469 1101 473 1108 472 C1113 471 1116 466 1115 460 C1114 453 1111 448 1106 447.5Z" fill="#e8968a" stroke="#7a4a40" stroke-width="1"/>
<ellipse cx="1135.2" cy="466.4" rx="27" ry="27.2" fill="#ebebeb" stroke="#555" stroke-width="1"/>
<circle cx="1134" cy="464.4" r="5.6" fill="#000"/>
<!-- mouth -->
<path d="M1056 477 C1057 472 1064 470 1069 475 L1106 502.5 C1112 505 1114 513 1109 518 C1104 522 1096 520 1092 512 C1082 508 1073 500 1067 493.5 C1060 494 1054 488 1056 477Z" fill="#e0553a" stroke="#6a3020" stroke-width="1"/>
<path d="M1067.5 476 L1106 503 C1104 509 1099 511.5 1093.5 511 C1083 507 1074 500.5 1067 493.5 C1066 487 1066 481 1067.5 476Z" fill="#ececec" stroke="#6a3020" stroke-width=".8"/>
<!-- boy hand -->
<path d="M1069 563 C1090 562 1108 570 1114 589.5 C1125 598 1131 605 1131.7 613 C1136 625 1138 632 1137.6 636.5 C1137 650 1134 662 1127.8 667.8 C1120 673 1112 674 1104.3 673.6 C1096 670 1090 665 1084.8 660 C1078 652 1073 645 1069 642.3 C1062 640 1057 638 1055.4 636.5 C1050 632 1049 628 1049.6 624.7 C1050 615 1053 610 1055.4 607 C1058 600 1059 594 1059.3 589.5 C1052 585 1045 580 1041.7 575.8 C1048 567 1058 563 1069 563Z" fill="#f9bf8a" stroke="#7a5a40" stroke-width="1"/>
<g fill="none" stroke="#7a5a40" stroke-width=".9">
<path d="M1088 568 C1105 585 1112 610 1108 650"/>
<path d="M1100 575 C1118 595 1122 625 1115 665"/>
<path d="M1072 620 C1080 612 1094 620 1090 632 C1085 640 1075 638 1072 630"/>
<path d="M1090 636 C1098 628 1110 634 1108 645 C1104 654 1094 652 1090 646"/>
<path d="M1105 650 C1112 645 1124 650 1122 660 C1118 668 1108 666 1105 660"/>
</g>
</g>
<g fill="none" stroke="#6a6a6a" stroke-width="1.2">
<rect x="494.5" y="210.5" width="787" height="445"/>
<rect x="538.5" y="235.5" width="699" height="395"/>
<path d="M594 235.5 V630.5 M625.5 235.5 V630.5 M1151 235.5 V630.5 M1183 235.5 V630.5"/>
<path d="M494.5 432 H518 M1258 432 H1281.5 M889 210.5 V222"/>
</g>
<rect x="888.5" y="187" width="1.2" height="492" fill="#5fd0f0"/>
<rect x="888.5" y="396.5" width="46" height="45" fill="none" stroke="#e8d84a" stroke-width="1" stroke-dasharray="1.5 1"/>
<path d="M877 432.5 H901 M889 422 V444" stroke="#333" stroke-width="1"/>
<rect x="888.5" y="574.5" width="75" height="75.5" fill="none" stroke="#b02a2a" stroke-width="1" stroke-dasharray="1.5 1"/>
<g fill="#e89a20"><rect x="618" y="680" width="2" height="2"/><rect x="640" y="680" width="2" height="2"/><rect x="837" y="680" width="2" height="2"/><rect x="922" y="680" width="2" height="2"/><rect x="975" y="680" width="2" height="2"/><rect x="1000" y="680" width="2" height="2"/><rect x="1007" y="680" width="2" height="2"/><rect x="1090" y="680" width="2" height="2"/><rect x="1150" y="680" width="2" height="2"/><rect x="1218" y="680" width="2" height="2"/><rect x="1235" y="680" width="2" height="2"/><rect x="873" y="185" width="2" height="2"/><rect x="904" y="185" width="2" height="2"/></g>
<rect x="368" y="683" width="1025" height="1" fill="#111"/>
<!-- comp toolbar -->
<g stroke="#b4b4b4" stroke-width="1.1" fill="none">
<path d="M377 701 H385 V693 M379 703 H387 V695"/>
<path d="M396 689.5 H407 V697.5 H396 Z M398 701 H405 M401.5 698 V701"/>
</g>
<path d="M415 692 Q423 689 431 692 L430.5 697 Q427 699.5 424 697.5 L423 696 L422 697.5 Q419 699.5 415.5 697 Z" fill="#b4b4b4"/><path d="M421 700 H425 L423 702Z" fill="#b4b4b4"/><circle cx="419.5" cy="694" r="1.5" fill="#232323"/><circle cx="426.5" cy="694" r="1.5" fill="#232323"/><rect x="373" y="689" width="10" height="8" fill="#b4b4b4"/><path d="M376.5 691 L380 693 L376.5 695Z" fill="#232323"/>
<rect x="436" y="686" width="66" height="18" rx="2" fill="#1d1d1d"/>
<path d="M491 693 L494.5 696.5 L498 693" stroke="#b0b0b0" stroke-width="1.1" fill="none"/>
<g stroke="#b4b4b4" stroke-width="1.1" fill="none"><path d="M509 690 H521 V699 H509 Z M515 687 V702 M506 694.5 H524"/></g>
<rect x="525" y="686" width="23" height="18" fill="#1a1a1a"/>
<path d="M531 690 L543 688.5 L542 700 L530 701 Z" stroke="#3a93f0" stroke-width="1.3" fill="none"/>
<rect x="549" y="686" width="67" height="18" rx="2" fill="#1d1d1d"/>
<path d="M622 692 H626 L627.5 690 H631 L632.5 692 H636 V701 H622 Z" fill="#b4b4b4"/><circle cx="629" cy="696" r="2.6" fill="#232323"/><circle cx="629" cy="696" r="1.5" fill="#b4b4b4"/>
<circle cx="651" cy="694" r="4.5" fill="none" stroke="#444" stroke-width="1.5"/><circle cx="648" cy="698" r="4" fill="none" stroke="#444" stroke-width="1.5"/>
<circle cx="673.5" cy="690.5" r="3" fill="#e03030"/><circle cx="670.5" cy="695" r="3" fill="#30b040"/><circle cx="676" cy="695" r="3" fill="#3a7be0"/><path d="M675 700 H680 L677.5 702.5Z" fill="#b0b0b0"/>
<rect x="685" y="686" width="84" height="18" rx="2" fill="#1d1d1d"/>
<path d="M758 693 L761.5 696.5 L765 693" stroke="#b0b0b0" stroke-width="1.1" fill="none"/>
<rect x="775.5" y="688.5" width="13" height="12" fill="none" stroke="#b4b4b4" stroke-width="1.2"/><rect x="778.5" y="691.5" width="7" height="6" fill="#b4b4b4"/>
<rect x="797.5" y="688.5" width="14" height="13" fill="none" stroke="#b4b4b4" stroke-width="1.2"/>
<g fill="#b4b4b4"><rect x="799" y="690" width="3" height="3"/><rect x="805" y="690" width="3" height="3"/><rect x="802" y="693" width="3" height="3"/><rect x="808" y="693" width="2" height="3"/><rect x="799" y="696" width="3" height="3"/><rect x="805" y="696" width="3" height="3"/></g>
<rect x="817" y="686" width="102" height="18" rx="2" fill="#1d1d1d"/>
<path d="M908 693 L911.5 696.5 L915 693" stroke="#b0b0b0" stroke-width="1.1" fill="none"/>
<rect x="922" y="686" width="70" height="18" rx="2" fill="#1d1d1d"/>
<path d="M980 693 L983.5 696.5 L987 693" stroke="#b0b0b0" stroke-width="1.1" fill="none"/>
<g stroke="#b4b4b4" stroke-width="1.2" fill="none">
<path d="M997 689 H1012 M999 687 L997 689 L999 691 M1010 687 L1012 689 L1010 691 M1000 694 H1009 V701 H1000 Z M1004.5 689 V694"/>
<path d="M1042 701 H1055 M1043 701 V692 H1047 V701 M1047 694 H1051 V701 M1051 690 H1054 V701 M1044.5 689 V692"/>
<path d="M1065 698 H1074 V702 H1065 Z M1067 692 H1072 V688 H1067 Z M1069.5 692 V695 M1066.5 695 H1072.5 M1066.5 695 V698 M1072.5 695 V698"/>
</g>
<rect x="1017" y="686" width="19" height="18" fill="#1a1a1a"/>
<path d="M1019.5 689.5 H1033 V699 H1019.5 Z" stroke="#b4b4b4" stroke-width="1.2" fill="none"/><path d="M1027 690 L1023 695 H1026.5 L1024.5 699 L1030 693.5 H1026.5 Z" fill="#b4b4b4"/><path d="M1030 701 H1034 L1032 703Z" fill="#b0b0b0"/>
<circle cx="1093.5" cy="695" r="6" fill="#b4b4b4"/><circle cx="1093.5" cy="695" r="2.5" fill="#232323"/><path d="M1090 689.5 L1093 695 M1099 692 L1093.5 695 M1096 701 L1093.5 695 M1088 698 L1093.5 695" stroke="#232323" stroke-width="1.1"/>
</svg>
<div class="t" style="left:432px;top:123px;font-size:12px;color:#a8a8a8">Composition</div>
<div class="t" style="left:499px;top:123px;font-size:12px;color:#3a93f0">MAIN_SCENE</div>
<div class="t" style="left:396px;top:148px;font-size:12px;color:#a0a0a0">FINAL</div>
<div class="t" style="left:460px;top:148px;font-size:12px;color:#3a93f0">MAIN_SCENE</div>
<div class="t" style="left:561px;top:148px;font-size:12px;color:#a0a0a0">Scene_2_xray</div>
<div class="t" style="left:663px;top:148px;font-size:12px;color:#a0a0a0">GUY-2</div>
<div class="t" style="left:441px;top:689px;font-size:12px;color:#b0b0b0">(45,6%)</div>
<div class="t" style="left:557px;top:690px;font-size:11px;color:#8a8a8a">0:00:14:07</div>
<div class="t" style="left:692px;top:689px;font-size:12px;color:#b0b0b0">Quarter</div>
<div class="t" style="left:823px;top:689px;font-size:12px;color:#b0b0b0">Active Camera</div>
<div class="t" style="left:931px;top:689px;font-size:12px;color:#b0b0b0">1 View</div>
<div class="t" style="left:1107px;top:689px;font-size:12px;color:#3a93f0">+0,0</div>
<!-- right panel -->
<div class="pan" style="left:1399px;top:113px;width:205px;height:594px"></div>
<div class="a" style="left:1604px;top:113px;width:13px;height:594px;background:#1f1f1f"></div>
<div class="a" style="left:1605px;top:115px;width:10px;height:465px;background:#2c2c2c;border-radius:5px"></div>
<svg class="a" style="left:0;top:0" width="1656" height="712">
<rect x="1399" y="141" width="205" height="2" fill="#1a1a1a"/>
<rect x="1399" y="171" width="205" height="2" fill="#1a1a1a"/>
<rect x="1399" y="201" width="205" height="2" fill="#1a1a1a"/>
<path d="M1585 215.5 H1593 M1585 219 H1593 M1585 222.5 H1593" stroke="#b0b0b0" stroke-width="1.1"/>
<rect x="1404" y="235" width="194" height="18" rx="2" fill="#171717"/>
<circle cx="1418" cy="241.5" r="3.5" fill="none" stroke="#aaa" stroke-width="1.1"/><path d="M1415.5 244 L1412.5 247" stroke="#aaa" stroke-width="1.2"/><path d="M1422 245 H1426 L1424 247.5Z" fill="#aaa"/>
<rect x="1399" y="256" width="205" height="1.5" fill="#151515"/>
<path d="M1405 261.5 L1408.5 265 L1405 268.5" stroke="#a0a0a0" stroke-width="1" fill="none"/>
<rect x="1401" y="273" width="202" height="1" fill="#1e1e1e"/>
<path d="M1405 278.5 L1408.5 282 L1405 285.5" stroke="#a0a0a0" stroke-width="1" fill="none"/>
<rect x="1401" y="290" width="202" height="1" fill="#1e1e1e"/>
<path d="M1405 295.5 L1408.5 299 L1405 302.5" stroke="#a0a0a0" stroke-width="1" fill="none"/>
<rect x="1401" y="307" width="202" height="1" fill="#1e1e1e"/>
<path d="M1405 312.5 L1408.5 316 L1405 319.5" stroke="#a0a0a0" stroke-width="1" fill="none"/>
<rect x="1401" y="324" width="202" height="1" fill="#1e1e1e"/>
<path d="M1405 329.5 L1408.5 333 L1405 336.5" stroke="#a0a0a0" stroke-width="1" fill="none"/>
<rect x="1401" y="341" width="202" height="1" fill="#1e1e1e"/>
<path d="M1405 346.5 L1408.5 350 L1405 353.5" stroke="#a0a0a0" stroke-width="1" fill="none"/>
<rect x="1401" y="358" width="202" height="1" fill="#1e1e1e"/>
<path d="M1405 363.5 L1408.5 367 L1405 370.5" stroke="#a0a0a0" stroke-width="1" fill="none"/>
<rect x="1401" y="375" width="202" height="1" fill="#1e1e1e"/>
<path d="M1405 380.5 L1408.5 384 L1405 387.5" stroke="#a0a0a0" stroke-width="1" fill="none"/>
<rect x="1401" y="392" width="202" height="1" fill="#1e1e1e"/>
<path d="M1405 397.5 L1408.5 401 L1405 404.5" stroke="#a0a0a0" stroke-width="1" fill="none"/>
<rect x="1401" y="409" width="202" height="1" fill="#1e1e1e"/>
<path d="M1405 414.5 L1408.5 418 L1405 421.5" stroke="#a0a0a0" stroke-width="1" fill="none"/>
<rect x="1401" y="426" width="202" height="1" fill="#1e1e1e"/>
<path d="M1405 431.5 L1408.5 435 L1405 438.5" stroke="#a0a0a0" stroke-width="1" fill="none"/>
<rect x="1401" y="443" width="202" height="1" fill="#1e1e1e"/>
<path d="M1405 448.5 L1408.5 452 L1405 455.5" stroke="#a0a0a0" stroke-width="1" fill="none"/>
<rect x="1401" y="460" width="202" height="1" fill="#1e1e1e"/>
<path d="M1405 465.5 L1408.5 469 L1405 472.5" stroke="#a0a0a0" stroke-width="1" fill="none"/>
<rect x="1401" y="477" width="202" height="1" fill="#1e1e1e"/>
<path d="M1405 482.5 L1408.5 486 L1405 489.5" stroke="#a0a0a0" stroke-width="1" fill="none"/>
<rect x="1401" y="494" width="202" height="1" fill="#1e1e1e"/>
<path d="M1405 499.5 L1408.5 503 L1405 506.5" stroke="#a0a0a0" stroke-width="1" fill="none"/>
<rect x="1401" y="511" width="202" height="1" fill="#1e1e1e"/>
<path d="M1405 516.5 L1408.5 520 L1405 523.5" stroke="#a0a0a0" stroke-width="1" fill="none"/>
<rect x="1401" y="528" width="202" height="1" fill="#1e1e1e"/>
<path d="M1405 533.5 L1408.5 537 L1405 540.5" stroke="#a0a0a0" stroke-width="1" fill="none"/>
<rect x="1401" y="545" width="202" height="1" fill="#1e1e1e"/>
<path d="M1405 550.5 L1408.5 554 L1405 557.5" stroke="#a0a0a0" stroke-width="1" fill="none"/>
<rect x="1401" y="562" width="202" height="1" fill="#1e1e1e"/>
<path d="M1405 567.5 L1408.5 571 L1405 574.5" stroke="#a0a0a0" stroke-width="1" fill="none"/>
<rect x="1401" y="579" width="202" height="1" fill="#1e1e1e"/>
<path d="M1405 584.5 L1408.5 588 L1405 591.5" stroke="#a0a0a0" stroke-width="1" fill="none"/>
<rect x="1401" y="596" width="202" height="1" fill="#1e1e1e"/>
<path d="M1405 601.5 L1408.5 605 L1405 608.5" stroke="#a0a0a0" stroke-width="1" fill="none"/>
<rect x="1401" y="613" width="202" height="1" fill="#1e1e1e"/>
<path d="M1405 618.5 L1408.5 622 L1405 625.5" stroke="#a0a0a0" stroke-width="1" fill="none"/>
<rect x="1401" y="630" width="202" height="1" fill="#1e1e1e"/>
<path d="M1405 635.5 L1408.5 639 L1405 642.5" stroke="#a0a0a0" stroke-width="1" fill="none"/>
<rect x="1401" y="647" width="202" height="1" fill="#1e1e1e"/>
<path d="M1405 652.5 L1408.5 656 L1405 659.5" stroke="#a0a0a0" stroke-width="1" fill="none"/>
<rect x="1401" y="664" width="202" height="1" fill="#1e1e1e"/>
<rect x="1399" y="665" width="205" height="1.5" fill="#151515"/>
<rect x="1602" y="665" width="1" height="19" fill="#151515"/>
<path d="M1584 670 H1596 V681 H1589 V675 H1584 Z" fill="#c8c8c8"/><path d="M1584 676 L1588 680 L1584 680Z" fill="#c8c8c8"/>
<rect x="1399" y="684" width="205" height="2" fill="#1a1a1a"/>
</svg>
<div class="t" style="left:1411px;top:122px;font-size:12px;color:#8e8e8e">Info</div>
<div class="t" style="left:1411px;top:152px;font-size:12px;color:#8e8e8e">Audio</div>
<div class="t" style="left:1411px;top:182px;font-size:12px;color:#8e8e8e">Preview</div>
<div class="t" style="left:1411px;top:212px;font-size:12px;color:#c0c0c0">Effects &amp; Presets</div>
<div class="t" style="left:1411px;top:695px;font-size:12px;color:#8e8e8e">Align</div>
<div class="t" style="left:1415px;top:259px;font-size:12px;color:#a8a8a8">* Animation Presets</div>
<div class="t" style="left:1415px;top:276px;font-size:12px;color:#a8a8a8">3D Channel</div>
<div class="t" style="left:1415px;top:293px;font-size:12px;color:#a8a8a8">Audio</div>
<div class="t" style="left:1415px;top:310px;font-size:12px;color:#a8a8a8">Blur &amp; Sharpen</div>
<div class="t" style="left:1415px;top:327px;font-size:12px;color:#a8a8a8">Boris FX Mocha</div>
<div class="t" style="left:1415px;top:344px;font-size:12px;color:#a8a8a8">Channel</div>
<div class="t" style="left:1415px;top:361px;font-size:12px;color:#a8a8a8">CINEMA 4D</div>
<div class="t" style="left:1415px;top:378px;font-size:12px;color:#a8a8a8">Color Correction</div>
<div class="t" style="left:1415px;top:395px;font-size:12px;color:#a8a8a8">Distort</div>
<div class="t" style="left:1415px;top:412px;font-size:12px;color:#a8a8a8">Expression Controls</div>
<div class="t" style="left:1415px;top:429px;font-size:12px;color:#a8a8a8">Generate</div>
<div class="t" style="left:1415px;top:446px;font-size:12px;color:#a8a8a8">Immersive Video</div>
<div class="t" style="left:1415px;top:463px;font-size:12px;color:#a8a8a8">Keying</div>
<div class="t" style="left:1415px;top:480px;font-size:12px;color:#a8a8a8">Matte</div>
<div class="t" style="left:1415px;top:497px;font-size:12px;color:#a8a8a8">Missing</div>
<div class="t" style="left:1415px;top:514px;font-size:12px;color:#a8a8a8">Noise &amp; Grain</div>
<div class="t" style="left:1415px;top:531px;font-size:12px;color:#a8a8a8">Obsolete</div>
<div class="t" style="left:1415px;top:548px;font-size:12px;color:#a8a8a8">Perspective</div>
<div class="t" style="left:1415px;top:565px;font-size:12px;color:#a8a8a8">Simulation</div>
<div class="t" style="left:1415px;top:582px;font-size:12px;color:#a8a8a8">Stylize</div>
<div class="t" style="left:1415px;top:599px;font-size:12px;color:#a8a8a8">Text</div>
<div class="t" style="left:1415px;top:616px;font-size:12px;color:#a8a8a8">Time</div>
<div class="t" style="left:1415px;top:633px;font-size:12px;color:#a8a8a8">Transition</div>
<div class="t" style="left:1415px;top:650px;font-size:12px;color:#a8a8a8">Utility</div>
<!-- timeline -->
<div class="pan" style="left:42px;top:712px;width:1575px;height:332px"></div>
<svg class="a" style="left:0;top:0" width="1656" height="1074">
<path d="M54.5 722.5 L59 727 M59 722.5 L54.5 727" stroke="#8a8a8a" stroke-width="1.1"/>
<path d="M168 722.5 H176 M168 726 H176 M168 729.5 H176" stroke="#b8b8b8" stroke-width="1.2"/>
<rect x="54" y="735" width="123" height="2" fill="#c0c0c0"/>
<rect x="68.7" y="719.5" width="10" height="10" fill="#b59e77"/>
<rect x="212.5" y="719.5" width="10" height="10" fill="#d03a3a"/>
<rect x="358.5" y="719.5" width="10" height="10" fill="#b59e77"/>
<rect x="464.5" y="719.5" width="10" height="10" fill="#b59e77"/>
<rect x="574.5" y="719.5" width="10" height="10" fill="#b59e77"/>
<rect x="725" y="719.5" width="10" height="10" fill="#b59e77"/>
<rect x="835" y="719.5" width="10" height="10" fill="#b59e77"/>
<rect x="996.8" y="719.5" width="10" height="10" fill="#b59e77"/>
<rect x="151" y="746.5" width="376" height="19" rx="2" fill="#1a1a1a"/>
<circle cx="163" cy="753.5" r="3.8" fill="none" stroke="#b0b0b0" stroke-width="1.1"/><path d="M160.3 756.2 L157 759.5" stroke="#b0b0b0" stroke-width="1.3"/><path d="M167 758 H172 L169.5 760.5Z" fill="#b0b0b0"/>
<g fill="#c0c0c0">
<path d="M543 752 H547 V751 H550 V753 H547 V752.8 H543Z"/><rect x="551" y="751" width="7" height="3"/><rect x="551" y="757" width="7" height="3"/><path d="M549.5 752 V758.5 H551" stroke="#c0c0c0" stroke-width="1" fill="none"/><path d="M555 761 H559 L557 763Z"/>
<path d="M579.5 746.5 L580.5 749.5 L583.5 748.5 L581.5 751 L584 753 L581 753 L581 756 L579.5 753.5 L577 755 L578 752 L575.5 750.5 L578.5 750Z"/>
<path d="M611 756 H627 V762.5 H611Z" fill="#8a8a8a"/><path d="M613 755.5 Q613 749.5 619 749.5 Q625 749.5 625 755.5Z" fill="#e0e0e0"/><rect x="618.3" y="752" width="1.4" height="9" fill="#c0c0c0"/><rect x="615.5" y="753" width="7" height="1.2" fill="#8a8a8a"/>
</g>
<g stroke="#c0c0c0" stroke-width="1.1" fill="none">
<path d="M582.5 756 L588 753 L593.5 756 V762 L588 765 L582.5 762Z M582.5 756 L588 759 L593.5 756 M588 759 V765"/>
<path d="M641.5 749.5 H652.5 V760.5 H641.5Z M638.5 752.5 V763.5 H649.5"/><rect x="643.5" y="751" width="7" height="8" fill="#c0c0c0" stroke="none"/><path d="M644 755 H650" stroke="#232323" stroke-width="1.2"/>
<circle cx="670" cy="759" r="5.5"/><circle cx="671.5" cy="757" r="5.5"/><circle cx="673" cy="755" r="5.5" fill="#8a8a8a"/>
<path d="M699 750 H713 V763 H699Z M700 753 V750 M703 750 V748 M706 750 V748 M709 750 V748 M712 750 V748 M701.5 755 Q704 752 706 756 Q708 760 711 759.5"/>
</g>
<rect x="42" y="774" width="687" height="1" fill="#151515"/>
<rect x="42" y="775" width="687" height="18" fill="#262626"/>
<rect x="42" y="792" width="687" height="1" fill="#151515"/>
<g fill="#161616"><rect x="76" y="778" width="1" height="12"/><rect x="103" y="778" width="1" height="12"/><rect x="391" y="778" width="1" height="12"/><rect x="458" y="778" width="1" height="12"/><rect x="596" y="778" width="1" height="12"/><rect x="713" y="778" width="1" height="12"/></g>
<path d="M57 780 H63 L69.5 786.5 L64 792 L57 785Z" fill="#b4b4b4"/><circle cx="60" cy="783" r="1.1" fill="#262626"/>
<g fill="#b8b8b8">
<path d="M397.5 784.5 Q403 778.5 408.5 784.5 Q403 790.5 397.5 784.5Z"/><circle cx="403" cy="784.5" r="2.4" fill="#262626"/><circle cx="403" cy="784.5" r="1.1"/>
<path d="M412 782 H415 L418.5 778.5 V790.5 L415 787 H412Z"/>
<circle cx="432.5" cy="784.5" r="3.5"/>
<rect x="443" y="783.5" width="9" height="7"/>
<path d="M466 786 Q466 779 470.5 779 Q475 779 475 786Z"/><rect x="464" y="787" width="13" height="1.2"/>
<circle cx="485.5" cy="784.5" r="2"/>
<path d="M524.5 779 H536 V790 H524.5Z"/>
</g>
<g stroke="#b8b8b8" stroke-width="1.1" fill="none"><path d="M420.5 781 Q423.5 784.5 420.5 788 M422.5 779.5 Q426.5 784.5 422.5 789.5"/><path d="M444.5 783.5 V781.5 Q444.5 778.5 447.5 778.5 Q450.5 778.5 450.5 781.5 V783.5"/>
<path d="M485.5 779 V780.5 M485.5 788.5 V790 M480 784.5 H481.5 M489.5 784.5 H491 M481.8 780.8 L482.8 781.8 M488.2 787.2 L489.2 788.2 M481.8 788.2 L482.8 787.2 M488.2 781.8 L489.2 780.8"/>
<path d="M495 779 L505.5 790" stroke-dasharray="1.5 1"/>
<path d="M569.5 781 L575.5 778 L581.5 781 V788 L575.5 791 L569.5 788Z M569.5 781 L575.5 784 L581.5 781 M575.5 784 V791"/><circle cx="542.5" cy="787" r="4"/><circle cx="544.5" cy="785" r="4"/><circle cx="560.5" cy="784.5" r="5"/></g>
<rect x="526" y="781" width="8.5" height="7" fill="#262626"/><rect x="527" y="783.5" width="6.5" height="2" fill="#b8b8b8"/><circle cx="546.5" cy="783" r="4" fill="#8a8a8a"/><path d="M557 788 A5 5 0 0 1 564 781 Z" fill="#c8c8c8"/>
<path d="M469.8 780 V787" stroke="#262626" stroke-width="1"/>
<text x="509" y="790" font-family="Liberation Serif" font-style="italic" font-size="13" fill="#b8b8b8">fx</text>
<rect x="42" y="793" width="687" height="17" fill="#2a2a2a"/>
<rect x="42" y="793" width="687" height="1" fill="#1c1c1c"/>
<path d="M50 798.0 L53.5 801.5 L50 805.0" stroke="#9a9a9a" stroke-width="1" fill="none"/>
<rect x="61" y="796.5" width="12" height="11.5" fill="#c43a3a"/>
<rect x="426.5" y="794.5" width="12.7" height="14" fill="#222"/>
<rect x="441.3" y="794.5" width="12.7" height="14" fill="#222"/>
<rect x="494" y="794.5" width="12.7" height="14" fill="#222"/>
<rect x="553.7" y="794.5" width="12.7" height="14" fill="#222"/>
<path d="M113.5 794.5 H120 L122.5 797 V808.5 H113.5 Z" fill="#f0f0f0"/><circle cx="118" cy="802.5" r="2.6" fill="#3a3a3a"/><circle cx="118" cy="802.5" r="1" fill="#e04040"/>
<path d="M412 799.0 H415 L419 795.5 V807.5 L415 804.0 H412Z" fill="#b8b8b8"/><path d="M420.5 798.5 Q422.5 801.5 420.5 804.5" stroke="#b8b8b8" stroke-width="1.1" fill="none"/>
<path d="M465.5 805.5 H476 M467 802.5 Q467 796.5 470.5 796.5 Q474 796.5 474 802.5Z" fill="#b8b8b8" stroke="#b8b8b8" stroke-width="1"/><path d="M470.5 798.5 V806.5 M468 801.5 H473" stroke="#272727" stroke-width="1"/>
<path d="M495.5 807.0 L505 796.5" stroke="#b8b8b8" stroke-width="1.2"/>
<path d="M607.5 802.5 m-1.8 0 a1.8 1.8 0 1 1 3.6 0 a3.6 3.6 0 1 1 -7.2 0 a5.4 5.4 0 1 1 10.8 0 a5.4 5.4 0 0 1 -1.5 3.8" stroke="#b8b8b8" stroke-width="1.1" fill="none"/>
<rect x="620" y="794.5" width="88.7" height="14" fill="#1c1c1c"/>
<path d="M697 800.0 L700.7 803.5 L704.4 800.0" stroke="#b8b8b8" stroke-width="1.1" fill="none"/>
<rect x="42" y="810" width="687" height="17" fill="#2a2a2a"/>
<rect x="42" y="810" width="687" height="1" fill="#1c1c1c"/>
<path d="M50 815.0 L53.5 818.5 L50 822.0" stroke="#9a9a9a" stroke-width="1" fill="none"/>
<rect x="61" y="813.5" width="12" height="11.5" fill="#c43a3a"/>
<rect x="426.5" y="811.5" width="12.7" height="14" fill="#222"/>
<rect x="441.3" y="811.5" width="12.7" height="14" fill="#222"/>
<rect x="494" y="811.5" width="12.7" height="14" fill="#222"/>
<rect x="553.7" y="811.5" width="12.7" height="14" fill="#222"/>
<path d="M113.5 811.5 H120 L122.5 814 V825.5 H113.5 Z" fill="#f0f0f0"/><circle cx="118" cy="819.5" r="2.6" fill="#3a3a3a"/><circle cx="118" cy="819.5" r="1" fill="#e04040"/>
<path d="M412 816.0 H415 L419 812.5 V824.5 L415 821.0 H412Z" fill="#b8b8b8"/><path d="M420.5 815.5 Q422.5 818.5 420.5 821.5" stroke="#b8b8b8" stroke-width="1.1" fill="none"/>
<path d="M465.5 822.5 H476 M467 819.5 Q467 813.5 470.5 813.5 Q474 813.5 474 819.5Z" fill="#b8b8b8" stroke="#b8b8b8" stroke-width="1"/><path d="M470.5 815.5 V823.5 M468 818.5 H473" stroke="#272727" stroke-width="1"/>
<path d="M495.5 824.0 L505 813.5" stroke="#b8b8b8" stroke-width="1.2"/>
<path d="M607.5 819.5 m-1.8 0 a1.8 1.8 0 1 1 3.6 0 a3.6 3.6 0 1 1 -7.2 0 a5.4 5.4 0 1 1 10.8 0 a5.4 5.4 0 0 1 -1.5 3.8" stroke="#b8b8b8" stroke-width="1.1" fill="none"/>
<rect x="620" y="811.5" width="88.7" height="14" fill="#1c1c1c"/>
<path d="M697 817.0 L700.7 820.5 L704.4 817.0" stroke="#b8b8b8" stroke-width="1.1" fill="none"/>
<rect x="42" y="827" width="687" height="17" fill="#2a2a2a"/>
<rect x="42" y="827" width="687" height="1" fill="#1c1c1c"/>
<path d="M50 832.0 L53.5 835.5 L50 839.0" stroke="#9a9a9a" stroke-width="1" fill="none"/>
<rect x="61" y="830.5" width="12" height="11.5" fill="#c43a3a"/>
<rect x="396.5" y="828.5" width="12.7" height="14" fill="#222"/>
<rect x="426.5" y="828.5" width="12.7" height="14" fill="#222"/>
<rect x="441.3" y="828.5" width="12.7" height="14" fill="#222"/>
<rect x="494" y="828.5" width="12.7" height="14" fill="#222"/>
<rect x="524.2" y="828.5" width="12.7" height="14" fill="#222"/>
<rect x="539" y="828.5" width="12.7" height="14" fill="#222"/>
<rect x="553.7" y="828.5" width="12.7" height="14" fill="#222"/>
<rect x="569.2" y="828.5" width="12.7" height="14" fill="#222"/>
<path d="M113.5 828.5 H120 L122.5 831 V842.5 H113.5 Z" fill="#f0f0f0"/><rect x="115" y="833.5" width="6" height="6" fill="#2d7fe0"/><path d="M117 835.0 L119.5 836.5 L117 838.0Z" fill="#fff"/>
<path d="M412 833.0 H415 L419 829.5 V841.5 L415 838.0 H412Z" fill="#b8b8b8"/><path d="M420.5 832.5 Q422.5 835.5 420.5 838.5" stroke="#b8b8b8" stroke-width="1.1" fill="none"/>
<path d="M465.5 839.5 H476 M467 836.5 Q467 830.5 470.5 830.5 Q474 830.5 474 836.5Z" fill="#b8b8b8" stroke="#b8b8b8" stroke-width="1"/><path d="M470.5 832.5 V840.5 M468 835.5 H473" stroke="#272727" stroke-width="1"/>
<path d="M495.5 841.0 L505 830.5" stroke="#b8b8b8" stroke-width="1.2"/>
<path d="M607.5 836.5 m-1.8 0 a1.8 1.8 0 1 1 3.6 0 a3.6 3.6 0 1 1 -7.2 0 a5.4 5.4 0 1 1 10.8 0 a5.4 5.4 0 0 1 -1.5 3.8" stroke="#b8b8b8" stroke-width="1.1" fill="none"/>
<rect x="620" y="828.5" width="88.7" height="14" fill="#1c1c1c"/>
<path d="M697 834.0 L700.7 837.5 L704.4 834.0" stroke="#b8b8b8" stroke-width="1.1" fill="none"/>
<rect x="42" y="844" width="687" height="17" fill="#2a2a2a"/>
<rect x="42" y="844" width="687" height="1" fill="#1c1c1c"/>
<path d="M50 849.0 L53.5 852.5 L50 856.0" stroke="#9a9a9a" stroke-width="1" fill="none"/>
<rect x="61" y="847.5" width="12" height="11.5" fill="#c43a3a"/>
<rect x="426.5" y="845.5" width="12.7" height="14" fill="#222"/>
<rect x="441.3" y="845.5" width="12.7" height="14" fill="#222"/>
<rect x="494" y="845.5" width="12.7" height="14" fill="#222"/>
<rect x="553.7" y="845.5" width="12.7" height="14" fill="#222"/>
<path d="M113.5 845.5 H120 L122.5 848 V859.5 H113.5 Z" fill="#f0f0f0"/><circle cx="118" cy="853.5" r="2.6" fill="#3a3a3a"/><circle cx="118" cy="853.5" r="1" fill="#e04040"/>
<path d="M412 850.0 H415 L419 846.5 V858.5 L415 855.0 H412Z" fill="#b8b8b8"/><path d="M420.5 849.5 Q422.5 852.5 420.5 855.5" stroke="#b8b8b8" stroke-width="1.1" fill="none"/>
<path d="M465.5 856.5 H476 M467 853.5 Q467 847.5 470.5 847.5 Q474 847.5 474 853.5Z" fill="#b8b8b8" stroke="#b8b8b8" stroke-width="1"/><path d="M470.5 849.5 V857.5 M468 852.5 H473" stroke="#272727" stroke-width="1"/>
<path d="M495.5 858.0 L505 847.5" stroke="#b8b8b8" stroke-width="1.2"/>
<path d="M607.5 853.5 m-1.8 0 a1.8 1.8 0 1 1 3.6 0 a3.6 3.6 0 1 1 -7.2 0 a5.4 5.4 0 1 1 10.8 0 a5.4 5.4 0 0 1 -1.5 3.8" stroke="#b8b8b8" stroke-width="1.1" fill="none"/>
<rect x="620" y="845.5" width="88.7" height="14" fill="#1c1c1c"/>
<path d="M697 851.0 L700.7 854.5 L704.4 851.0" stroke="#b8b8b8" stroke-width="1.1" fill="none"/>
<rect x="42" y="861" width="687" height="17" fill="#2a2a2a"/>
<rect x="42" y="861" width="687" height="1" fill="#1c1c1c"/>
<path d="M50 866.0 L53.5 869.5 L50 873.0" stroke="#9a9a9a" stroke-width="1" fill="none"/>
<rect x="61" y="864.5" width="12" height="11.5" fill="#c43a3a"/>
<rect x="426.5" y="862.5" width="12.7" height="14" fill="#222"/>
<rect x="441.3" y="862.5" width="12.7" height="14" fill="#222"/>
<rect x="494" y="862.5" width="12.7" height="14" fill="#222"/>
<rect x="553.7" y="862.5" width="12.7" height="14" fill="#222"/>
<path d="M113.5 862.5 H120 L122.5 865 V876.5 H113.5 Z" fill="#f0f0f0"/><circle cx="118" cy="870.5" r="2.6" fill="#3a3a3a"/><circle cx="118" cy="870.5" r="1" fill="#e04040"/>
<path d="M412 867.0 H415 L419 863.5 V875.5 L415 872.0 H412Z" fill="#b8b8b8"/><path d="M420.5 866.5 Q422.5 869.5 420.5 872.5" stroke="#b8b8b8" stroke-width="1.1" fill="none"/>
<path d="M465.5 873.5 H476 M467 870.5 Q467 864.5 470.5 864.5 Q474 864.5 474 870.5Z" fill="#b8b8b8" stroke="#b8b8b8" stroke-width="1"/><path d="M470.5 866.5 V874.5 M468 869.5 H473" stroke="#272727" stroke-width="1"/>
<path d="M495.5 875.0 L505 864.5" stroke="#b8b8b8" stroke-width="1.2"/>
<path d="M607.5 870.5 m-1.8 0 a1.8 1.8 0 1 1 3.6 0 a3.6 3.6 0 1 1 -7.2 0 a5.4 5.4 0 1 1 10.8 0 a5.4 5.4 0 0 1 -1.5 3.8" stroke="#b8b8b8" stroke-width="1.1" fill="none"/>
<rect x="620" y="862.5" width="88.7" height="14" fill="#1c1c1c"/>
<path d="M697 868.0 L700.7 871.5 L704.4 868.0" stroke="#b8b8b8" stroke-width="1.1" fill="none"/>
<rect x="42" y="878" width="687" height="17" fill="#2a2a2a"/>
<rect x="42" y="878" width="687" height="1" fill="#1c1c1c"/>
<path d="M50 883.0 L53.5 886.5 L50 890.0" stroke="#9a9a9a" stroke-width="1" fill="none"/>
<rect x="61" y="881.5" width="12" height="11.5" fill="#e3d44a"/>
<rect x="426.5" y="879.5" width="12.7" height="14" fill="#222"/>
<rect x="441.3" y="879.5" width="12.7" height="14" fill="#222"/>
<rect x="479" y="879.5" width="12.7" height="14" fill="#222"/>
<rect x="494" y="879.5" width="12.7" height="14" fill="#222"/>
<rect x="539" y="879.5" width="12.7" height="14" fill="#222"/>
<rect x="553.7" y="879.5" width="12.7" height="14" fill="#222"/>
<rect x="569.2" y="879.5" width="12.7" height="14" fill="#222"/>
<rect x="112" y="880" width="12.5" height="13" fill="#fafafa"/>
<path d="M397.5 886.5 Q403 881.0 408.5 886.5 Q403 892.0 397.5 886.5Z" fill="#b8b8b8"/><circle cx="403" cy="886.5" r="2.2" fill="#272727"/><circle cx="403" cy="886.5" r="1" fill="#b8b8b8"/>
<path d="M465.5 890.5 H476 M467 887.5 Q467 881.5 470.5 881.5 Q474 881.5 474 887.5Z" fill="#b8b8b8" stroke="#b8b8b8" stroke-width="1"/><path d="M470.5 883.5 V891.5 M468 886.5 H473" stroke="#272727" stroke-width="1"/>
<path d="M495.5 892.0 L505 881.5" stroke="#b8b8b8" stroke-width="1.2"/>
<path d="M607.5 887.5 m-1.8 0 a1.8 1.8 0 1 1 3.6 0 a3.6 3.6 0 1 1 -7.2 0 a5.4 5.4 0 1 1 10.8 0 a5.4 5.4 0 0 1 -1.5 3.8" stroke="#b8b8b8" stroke-width="1.1" fill="none"/>
<rect x="620" y="879.5" width="88.7" height="14" fill="#1c1c1c"/>
<path d="M697 885.0 L700.7 888.5 L704.4 885.0" stroke="#b8b8b8" stroke-width="1.1" fill="none"/>
<rect x="42" y="895" width="687" height="17" fill="#2a2a2a"/>
<rect x="42" y="895" width="687" height="1" fill="#1c1c1c"/>
<path d="M50 900.0 L53.5 903.5 L50 907.0" stroke="#9a9a9a" stroke-width="1" fill="none"/>
<rect x="61" y="898.5" width="12" height="11.5" fill="#e3d44a"/>
<rect x="426.5" y="896.5" width="12.7" height="14" fill="#222"/>
<rect x="441.3" y="896.5" width="12.7" height="14" fill="#222"/>
<rect x="539" y="896.5" width="12.7" height="14" fill="#222"/>
<rect x="553.7" y="896.5" width="12.7" height="14" fill="#222"/>
<rect x="569.2" y="896.5" width="12.7" height="14" fill="#222"/>
<path d="M112.5 898 H123.5 V901 H122.5 Q122 899.2 120.5 899.2 H119 V908.5 L120.5 909 V910 H115.5 V909 L117 908.5 V899.2 H115.5 Q114 899.2 113.5 901 H112.5Z" fill="#c8c8c8"/>
<path d="M397.5 903.5 Q403 898.0 408.5 903.5 Q403 909.0 397.5 903.5Z" fill="#b8b8b8"/><circle cx="403" cy="903.5" r="2.2" fill="#272727"/><circle cx="403" cy="903.5" r="1" fill="#b8b8b8"/>
<path d="M465 907.0 H476.5" stroke="#b8b8b8" stroke-width="1.2"/><path d="M467.5 906.5 Q470.7 901.5 474 906.5Z" fill="#b8b8b8"/>
<circle cx="485.3" cy="903.5" r="2.3" fill="none" stroke="#777" stroke-width="1.1"/><path d="M485.3 898.5 V900.2 M485.3 906.8 V908.5 M480.3 903.5 H482 M488.6 903.5 H490.3 M481.8 900.0 L483 901.2 M487.6 905.8 L488.8 907.0 M481.8 907.0 L483 905.8 M487.6 901.2 L488.8 900.0" stroke="#777" stroke-width="1"/>
<path d="M495.5 909.0 L505 898.5" stroke="#b8b8b8" stroke-width="1.2"/>
<path d="M607.5 904.5 m-1.8 0 a1.8 1.8 0 1 1 3.6 0 a3.6 3.6 0 1 1 -7.2 0 a5.4 5.4 0 1 1 10.8 0 a5.4 5.4 0 0 1 -1.5 3.8" stroke="#b8b8b8" stroke-width="1.1" fill="none"/>
<rect x="620" y="896.5" width="88.7" height="14" fill="#1c1c1c"/>
<path d="M697 902.0 L700.7 905.5 L704.4 902.0" stroke="#b8b8b8" stroke-width="1.1" fill="none"/>
<rect x="42" y="912" width="687" height="17" fill="#2a2a2a"/>
<rect x="42" y="912" width="687" height="1" fill="#1c1c1c"/>
<path d="M50 917.0 L53.5 920.5 L50 924.0" stroke="#9a9a9a" stroke-width="1" fill="none"/>
<rect x="61" y="915.5" width="12" height="11.5" fill="#e3d44a"/>
<rect x="426.5" y="913.5" width="12.7" height="14" fill="#222"/>
<rect x="441.3" y="913.5" width="12.7" height="14" fill="#222"/>
<rect x="539" y="913.5" width="12.7" height="14" fill="#222"/>
<rect x="553.7" y="913.5" width="12.7" height="14" fill="#222"/>
<rect x="569.2" y="913.5" width="12.7" height="14" fill="#222"/>
<path d="M118 914 L119.7 919 L124.5 919 L120.6 922 L122 927 L118 924 L114 927 L115.4 922 L111.5 919 L116.3 919Z" fill="#c8c8c8"/>
<path d="M397.5 920.5 Q403 915.0 408.5 920.5 Q403 926.0 397.5 920.5Z" fill="#b8b8b8"/><circle cx="403" cy="920.5" r="2.2" fill="#272727"/><circle cx="403" cy="920.5" r="1" fill="#b8b8b8"/>
<path d="M465 924.0 H476.5" stroke="#b8b8b8" stroke-width="1.2"/><path d="M467.5 923.5 Q470.7 918.5 474 923.5Z" fill="#b8b8b8"/>
<circle cx="485.3" cy="920.5" r="2.3" fill="none" stroke="#777" stroke-width="1.1"/><path d="M485.3 915.5 V917.2 M485.3 923.8 V925.5 M480.3 920.5 H482 M488.6 920.5 H490.3 M481.8 917.0 L483 918.2 M487.6 922.8 L488.8 924.0 M481.8 924.0 L483 922.8 M487.6 918.2 L488.8 917.0" stroke="#777" stroke-width="1"/>
<path d="M495.5 926.0 L505 915.5" stroke="#b8b8b8" stroke-width="1.2"/>
<path d="M607.5 921.5 m-1.8 0 a1.8 1.8 0 1 1 3.6 0 a3.6 3.6 0 1 1 -7.2 0 a5.4 5.4 0 1 1 10.8 0 a5.4 5.4 0 0 1 -1.5 3.8" stroke="#b8b8b8" stroke-width="1.1" fill="none"/>
<rect x="620" y="913.5" width="88.7" height="14" fill="#1c1c1c"/>
<path d="M697 919.0 L700.7 922.5 L704.4 919.0" stroke="#b8b8b8" stroke-width="1.1" fill="none"/>
<rect x="42" y="929" width="687" height="17" fill="#2a2a2a"/>
<rect x="42" y="929" width="687" height="1" fill="#1c1c1c"/>
<path d="M50 934.0 L53.5 937.5 L50 941.0" stroke="#9a9a9a" stroke-width="1" fill="none"/>
<rect x="61" y="932.5" width="12" height="11.5" fill="#e3d44a"/>
<rect x="396.5" y="930.5" width="12.7" height="14" fill="#222"/>
<rect x="411.3" y="930.5" width="12.7" height="14" fill="#222"/>
<rect x="441.3" y="930.5" width="12.7" height="14" fill="#222"/>
<rect x="539" y="930.5" width="12.7" height="14" fill="#222"/>
<rect x="553.7" y="930.5" width="12.7" height="14" fill="#222"/>
<rect x="569.2" y="930.5" width="12.7" height="14" fill="#222"/>
<rect x="110" y="931" width="15" height="13" fill="#ddd"/><rect x="111.5" y="933" width="12" height="9" fill="#4a4a4a"/><circle cx="115" cy="936.5" r="2.3" fill="#3a7be0"/><rect x="116.5" y="935.5" width="5" height="4" fill="#d83030"/><path d="M113 941.5 L115.5 937.5 L118 941.5Z" fill="#2aa84a"/>
<path d="M465 941.0 H476.5" stroke="#b8b8b8" stroke-width="1.2"/><path d="M467.5 940.5 Q470.7 935.5 474 940.5Z" fill="#b8b8b8"/>
<circle cx="485.3" cy="937.5" r="2.3" fill="none" stroke="#d8d8d8" stroke-width="1.1"/><path d="M485.3 932.5 V934.2 M485.3 940.8 V942.5 M480.3 937.5 H482 M488.6 937.5 H490.3 M481.8 934.0 L483 935.2 M487.6 939.8 L488.8 941.0 M481.8 941.0 L483 939.8 M487.6 935.2 L488.8 934.0" stroke="#d8d8d8" stroke-width="1"/>
<rect x="497" y="936.5" width="6" height="2" fill="#b8b8b8"/><rect x="542" y="936.5" width="6" height="2" fill="#b8b8b8"/>
<path d="M607.5 938.5 m-1.8 0 a1.8 1.8 0 1 1 3.6 0 a3.6 3.6 0 1 1 -7.2 0 a5.4 5.4 0 1 1 10.8 0 a5.4 5.4 0 0 1 -1.5 3.8" stroke="#b8b8b8" stroke-width="1.1" fill="none"/>
<rect x="620" y="930.5" width="88.7" height="14" fill="#1c1c1c"/>
<path d="M697 936.0 L700.7 939.5 L704.4 936.0" stroke="#b8b8b8" stroke-width="1.1" fill="none"/>
<rect x="42" y="946" width="687" height="17" fill="#2a2a2a"/>
<rect x="42" y="946" width="687" height="1" fill="#1c1c1c"/>
<path d="M50 951.0 L53.5 954.5 L50 958.0" stroke="#9a9a9a" stroke-width="1" fill="none"/>
<rect x="61" y="949.5" width="12" height="11.5" fill="#e3d44a"/>
<rect x="411.3" y="947.5" width="12.7" height="14" fill="#222"/>
<rect x="426.5" y="947.5" width="12.7" height="14" fill="#222"/>
<rect x="441.3" y="947.5" width="12.7" height="14" fill="#222"/>
<rect x="494" y="947.5" width="12.7" height="14" fill="#222"/>
<rect x="524.2" y="947.5" width="12.7" height="14" fill="#222"/>
<rect x="539" y="947.5" width="12.7" height="14" fill="#222"/>
<rect x="553.7" y="947.5" width="12.7" height="14" fill="#222"/>
<rect x="569.2" y="947.5" width="12.7" height="14" fill="#222"/>
<path d="M113.5 947.5 H120 L122.5 950 V961.5 H113.5 Z" fill="#f0f0f0"/><rect x="115" y="952.5" width="6" height="6" fill="#2d7fe0"/><path d="M117 954.0 L119.5 955.5 L117 957.0Z" fill="#fff"/>
<path d="M397.5 954.5 Q403 949.0 408.5 954.5 Q403 960.0 397.5 954.5Z" fill="#b8b8b8"/><circle cx="403" cy="954.5" r="2.2" fill="#272727"/><circle cx="403" cy="954.5" r="1" fill="#b8b8b8"/>
<path d="M465 958.0 H476.5" stroke="#b8b8b8" stroke-width="1.2"/><path d="M467.5 957.5 Q470.7 952.5 474 957.5Z" fill="#b8b8b8"/>
<path d="M495.5 960.0 L505 949.5" stroke="#b8b8b8" stroke-width="1.2"/>
<path d="M607.5 955.5 m-1.8 0 a1.8 1.8 0 1 1 3.6 0 a3.6 3.6 0 1 1 -7.2 0 a5.4 5.4 0 1 1 10.8 0 a5.4 5.4 0 0 1 -1.5 3.8" stroke="#b8b8b8" stroke-width="1.1" fill="none"/>
<rect x="620" y="947.5" width="88.7" height="14" fill="#1c1c1c"/>
<path d="M697 953.0 L700.7 956.5 L704.4 953.0" stroke="#b8b8b8" stroke-width="1.1" fill="none"/>
<rect x="42" y="963" width="687" height="17" fill="#2a2a2a"/>
<rect x="42" y="963" width="687" height="1" fill="#1c1c1c"/>
<path d="M50 968.0 L53.5 971.5 L50 975.0" stroke="#9a9a9a" stroke-width="1" fill="none"/>
<rect x="61" y="966.5" width="12" height="11.5" fill="#e3d44a"/>
<rect x="411.3" y="964.5" width="12.7" height="14" fill="#222"/>
<rect x="426.5" y="964.5" width="12.7" height="14" fill="#222"/>
<rect x="441.3" y="964.5" width="12.7" height="14" fill="#222"/>
<rect x="494" y="964.5" width="12.7" height="14" fill="#222"/>
<rect x="524.2" y="964.5" width="12.7" height="14" fill="#222"/>
<rect x="539" y="964.5" width="12.7" height="14" fill="#222"/>
<rect x="553.7" y="964.5" width="12.7" height="14" fill="#222"/>
<rect x="569.2" y="964.5" width="12.7" height="14" fill="#222"/>
<path d="M113.5 964.5 H120 L122.5 967 V978.5 H113.5 Z" fill="#f0f0f0"/><rect x="115" y="969.5" width="6" height="6" fill="#2d7fe0"/><path d="M117 971.0 L119.5 972.5 L117 974.0Z" fill="#fff"/>
<path d="M397.5 971.5 Q403 966.0 408.5 971.5 Q403 977.0 397.5 971.5Z" fill="#b8b8b8"/><circle cx="403" cy="971.5" r="2.2" fill="#272727"/><circle cx="403" cy="971.5" r="1" fill="#b8b8b8"/>
<path d="M465 975.0 H476.5" stroke="#b8b8b8" stroke-width="1.2"/><path d="M467.5 974.5 Q470.7 969.5 474 974.5Z" fill="#b8b8b8"/>
<path d="M495.5 977.0 L505 966.5" stroke="#b8b8b8" stroke-width="1.2"/>
<path d="M607.5 972.5 m-1.8 0 a1.8 1.8 0 1 1 3.6 0 a3.6 3.6 0 1 1 -7.2 0 a5.4 5.4 0 1 1 10.8 0 a5.4 5.4 0 0 1 -1.5 3.8" stroke="#b8b8b8" stroke-width="1.1" fill="none"/>
<rect x="620" y="964.5" width="88.7" height="14" fill="#1c1c1c"/>
<path d="M697 970.0 L700.7 973.5 L704.4 970.0" stroke="#b8b8b8" stroke-width="1.1" fill="none"/>
<rect x="42" y="980" width="687" height="17" fill="#2a2a2a"/>
<rect x="42" y="980" width="687" height="1" fill="#1c1c1c"/>
<path d="M50 985.0 L53.5 988.5 L50 992.0" stroke="#9a9a9a" stroke-width="1" fill="none"/>
<rect x="61" y="983.5" width="12" height="11.5" fill="#e3d44a"/>
<rect x="411.3" y="981.5" width="12.7" height="14" fill="#222"/>
<rect x="426.5" y="981.5" width="12.7" height="14" fill="#222"/>
<rect x="441.3" y="981.5" width="12.7" height="14" fill="#222"/>
<rect x="494" y="981.5" width="12.7" height="14" fill="#222"/>
<rect x="524.2" y="981.5" width="12.7" height="14" fill="#222"/>
<rect x="539" y="981.5" width="12.7" height="14" fill="#222"/>
<rect x="553.7" y="981.5" width="12.7" height="14" fill="#222"/>
<rect x="569.2" y="981.5" width="12.7" height="14" fill="#222"/>
<path d="M113.5 981.5 H120 L122.5 984 V995.5 H113.5 Z" fill="#f0f0f0"/><rect x="115" y="986.5" width="6" height="6" fill="#2d7fe0"/><path d="M117 988.0 L119.5 989.5 L117 991.0Z" fill="#fff"/>
<path d="M397.5 988.5 Q403 983.0 408.5 988.5 Q403 994.0 397.5 988.5Z" fill="#b8b8b8"/><circle cx="403" cy="988.5" r="2.2" fill="#272727"/><circle cx="403" cy="988.5" r="1" fill="#b8b8b8"/>
<path d="M465 992.0 H476.5" stroke="#b8b8b8" stroke-width="1.2"/><path d="M467.5 991.5 Q470.7 986.5 474 991.5Z" fill="#b8b8b8"/>
<path d="M495.5 994.0 L505 983.5" stroke="#b8b8b8" stroke-width="1.2"/>
<path d="M607.5 989.5 m-1.8 0 a1.8 1.8 0 1 1 3.6 0 a3.6 3.6 0 1 1 -7.2 0 a5.4 5.4 0 1 1 10.8 0 a5.4 5.4 0 0 1 -1.5 3.8" stroke="#b8b8b8" stroke-width="1.1" fill="none"/>
<rect x="620" y="981.5" width="88.7" height="14" fill="#1c1c1c"/>
<path d="M697 987.0 L700.7 990.5 L704.4 987.0" stroke="#b8b8b8" stroke-width="1.1" fill="none"/>
<rect x="42" y="997" width="687" height="17" fill="#2a2a2a"/>
<rect x="42" y="997" width="687" height="1" fill="#1c1c1c"/>
<path d="M50 1002.0 L53.5 1005.5 L50 1009.0" stroke="#9a9a9a" stroke-width="1" fill="none"/>
<rect x="61" y="1000.5" width="12" height="11.5" fill="#e3d44a"/>
<rect x="411.3" y="998.5" width="12.7" height="14" fill="#222"/>
<rect x="426.5" y="998.5" width="12.7" height="14" fill="#222"/>
<rect x="441.3" y="998.5" width="12.7" height="14" fill="#222"/>
<rect x="494" y="998.5" width="12.7" height="14" fill="#222"/>
<rect x="524.2" y="998.5" width="12.7" height="14" fill="#222"/>
<rect x="539" y="998.5" width="12.7" height="14" fill="#222"/>
<rect x="553.7" y="998.5" width="12.7" height="14" fill="#222"/>
<rect x="569.2" y="998.5" width="12.7" height="14" fill="#222"/>
<path d="M113.5 998.5 H120 L122.5 1001 V1012.5 H113.5 Z" fill="#f0f0f0"/><rect x="115" y="1003.5" width="6" height="6" fill="#2d7fe0"/><path d="M117 1005.0 L119.5 1006.5 L117 1008.0Z" fill="#fff"/>
<path d="M397.5 1005.5 Q403 1000.0 408.5 1005.5 Q403 1011.0 397.5 1005.5Z" fill="#b8b8b8"/><circle cx="403" cy="1005.5" r="2.2" fill="#272727"/><circle cx="403" cy="1005.5" r="1" fill="#b8b8b8"/>
<path d="M465 1009.0 H476.5" stroke="#b8b8b8" stroke-width="1.2"/><path d="M467.5 1008.5 Q470.7 1003.5 474 1008.5Z" fill="#b8b8b8"/>
<path d="M495.5 1011.0 L505 1000.5" stroke="#b8b8b8" stroke-width="1.2"/>
<path d="M607.5 1006.5 m-1.8 0 a1.8 1.8 0 1 1 3.6 0 a3.6 3.6 0 1 1 -7.2 0 a5.4 5.4 0 1 1 10.8 0 a5.4 5.4 0 0 1 -1.5 3.8" stroke="#b8b8b8" stroke-width="1.1" fill="none"/>
<rect x="620" y="998.5" width="88.7" height="14" fill="#1c1c1c"/>
<path d="M697 1004.0 L700.7 1007.5 L704.4 1004.0" stroke="#b8b8b8" stroke-width="1.1" fill="none"/>
<rect x="42" y="1014" width="687" height="17" fill="#2a2a2a"/>
<rect x="42" y="1014" width="687" height="1" fill="#1c1c1c"/>
<path d="M50 1019.0 L53.5 1022.5 L50 1026.0" stroke="#9a9a9a" stroke-width="1" fill="none"/>
<rect x="61" y="1017.5" width="12" height="11.5" fill="#e3d44a"/>
<rect x="411.3" y="1015.5" width="12.7" height="14" fill="#222"/>
<rect x="426.5" y="1015.5" width="12.7" height="14" fill="#222"/>
<rect x="441.3" y="1015.5" width="12.7" height="14" fill="#222"/>
<rect x="494" y="1015.5" width="12.7" height="14" fill="#222"/>
<rect x="524.2" y="1015.5" width="12.7" height="14" fill="#222"/>
<rect x="539" y="1015.5" width="12.7" height="14" fill="#222"/>
<rect x="553.7" y="1015.5" width="12.7" height="14" fill="#222"/>
<rect x="569.2" y="1015.5" width="12.7" height="14" fill="#222"/>
<path d="M113.5 1015.5 H120 L122.5 1018 V1029.5 H113.5 Z" fill="#f0f0f0"/><rect x="115" y="1020.5" width="6" height="6" fill="#2d7fe0"/><path d="M117 1022.0 L119.5 1023.5 L117 1025.0Z" fill="#fff"/>
<path d="M397.5 1022.5 Q403 1017.0 408.5 1022.5 Q403 1028.0 397.5 1022.5Z" fill="#b8b8b8"/><circle cx="403" cy="1022.5" r="2.2" fill="#272727"/><circle cx="403" cy="1022.5" r="1" fill="#b8b8b8"/>
<path d="M465 1026.0 H476.5" stroke="#b8b8b8" stroke-width="1.2"/><path d="M467.5 1025.5 Q470.7 1020.5 474 1025.5Z" fill="#b8b8b8"/>
<path d="M495.5 1028.0 L505 1017.5" stroke="#b8b8b8" stroke-width="1.2"/>
<path d="M607.5 1023.5 m-1.8 0 a1.8 1.8 0 1 1 3.6 0 a3.6 3.6 0 1 1 -7.2 0 a5.4 5.4 0 1 1 10.8 0 a5.4 5.4 0 0 1 -1.5 3.8" stroke="#b8b8b8" stroke-width="1.1" fill="none"/>
<rect x="620" y="1015.5" width="88.7" height="14" fill="#1c1c1c"/>
<path d="M697 1021.0 L700.7 1024.5 L704.4 1021.0" stroke="#b8b8b8" stroke-width="1.1" fill="none"/>
<rect x="729" y="737" width="1" height="288" fill="#111"/>
<rect x="730" y="743.5" width="868" height="11" fill="#151515"/>
<rect x="736" y="745" width="835" height="8" fill="#7a7a7a"/>
<path d="M736 745 H731 Q730 749 731 753 H736Z" fill="#3a93f0"/>
<path d="M1560 745 H1568 Q1570 749 1568 753 H1560Z" fill="#3a93f0"/>
<rect x="944" y="745" width="1.5" height="8" fill="#8fc6ff"/>
<rect x="737.0" y="768" width="1" height="5" fill="#a8a8a8"/>
<rect x="812.2" y="768" width="1" height="5" fill="#a8a8a8"/>
<rect x="887.4" y="768" width="1" height="5" fill="#a8a8a8"/>
<rect x="962.7" y="768" width="1" height="5" fill="#a8a8a8"/>
<rect x="1037.9" y="768" width="1" height="5" fill="#a8a8a8"/>
<rect x="1113.1" y="768" width="1" height="5" fill="#a8a8a8"/>
<rect x="1188.3" y="768" width="1" height="5" fill="#a8a8a8"/>
<rect x="1263.5" y="768" width="1" height="5" fill="#a8a8a8"/>
<rect x="1338.8" y="768" width="1" height="5" fill="#a8a8a8"/>
<rect x="1414.0" y="768" width="1" height="5" fill="#a8a8a8"/>
<rect x="1489.2" y="768" width="1" height="5" fill="#a8a8a8"/>
<rect x="1564.4" y="768" width="1" height="5" fill="#a8a8a8"/>
<rect x="730" y="773.5" width="868" height="16" fill="#232323"/>
<rect x="763" y="774.5" width="835" height="14.5" fill="#6d6d6d"/>
<path d="M757.5 774.5 H763 V789 H757.5 Q756.5 781 757.5 774.5Z" fill="#3a93f0"/>
<rect x="730" y="789" width="868" height="4" fill="#151515"/>
<g fill="#21c045"><rect x="893" y="790" width="2" height="2"/><rect x="951" y="790" width="2" height="2"/><rect x="1162" y="790" width="1" height="2"/><rect x="1233" y="790" width="2" height="2"/><rect x="1300" y="790" width="1" height="2"/><rect x="1386" y="790" width="2" height="2"/></g>
<rect x="730" y="793" width="868" height="17" fill="#3b3b3b"/><rect x="730" y="793" width="33" height="17" fill="#303030"/><rect x="730" y="793" width="868" height="1" fill="#2b2b2b"/>
<rect x="730" y="810" width="868" height="17" fill="#3b3b3b"/><rect x="730" y="810" width="33" height="17" fill="#303030"/><rect x="730" y="810" width="868" height="1" fill="#2b2b2b"/>
<rect x="730" y="827" width="868" height="17" fill="#3b3b3b"/><rect x="730" y="827" width="33" height="17" fill="#303030"/><rect x="730" y="827" width="868" height="1" fill="#2b2b2b"/>
<rect x="730" y="844" width="868" height="17" fill="#3b3b3b"/><rect x="730" y="844" width="33" height="17" fill="#303030"/><rect x="730" y="844" width="868" height="1" fill="#2b2b2b"/>
<rect x="730" y="861" width="868" height="17" fill="#3b3b3b"/><rect x="730" y="861" width="33" height="17" fill="#303030"/><rect x="730" y="861" width="868" height="1" fill="#2b2b2b"/>
<rect x="730" y="878" width="868" height="17" fill="#3b3b3b"/><rect x="730" y="878" width="33" height="17" fill="#303030"/><rect x="730" y="878" width="868" height="1" fill="#2b2b2b"/>
<rect x="730" y="895" width="868" height="17" fill="#3b3b3b"/><rect x="730" y="895" width="33" height="17" fill="#303030"/><rect x="730" y="895" width="868" height="1" fill="#2b2b2b"/>
<rect x="730" y="912" width="868" height="17" fill="#3b3b3b"/><rect x="730" y="912" width="33" height="17" fill="#303030"/><rect x="730" y="912" width="868" height="1" fill="#2b2b2b"/>
<rect x="730" y="929" width="868" height="17" fill="#3b3b3b"/><rect x="730" y="929" width="33" height="17" fill="#303030"/><rect x="730" y="929" width="868" height="1" fill="#2b2b2b"/>
<rect x="730" y="946" width="868" height="17" fill="#3b3b3b"/><rect x="730" y="946" width="33" height="17" fill="#303030"/><rect x="730" y="946" width="868" height="1" fill="#2b2b2b"/>
<rect x="730" y="963" width="868" height="17" fill="#3b3b3b"/><rect x="730" y="963" width="33" height="17" fill="#303030"/><rect x="730" y="963" width="868" height="1" fill="#2b2b2b"/>
<rect x="730" y="980" width="868" height="17" fill="#3b3b3b"/><rect x="730" y="980" width="33" height="17" fill="#303030"/><rect x="730" y="980" width="868" height="1" fill="#2b2b2b"/>
<rect x="730" y="997" width="868" height="17" fill="#3b3b3b"/><rect x="730" y="997" width="33" height="17" fill="#303030"/><rect x="730" y="997" width="868" height="1" fill="#2b2b2b"/>
<rect x="730" y="1014" width="868" height="17" fill="#3b3b3b"/><rect x="730" y="1014" width="33" height="17" fill="#303030"/><rect x="730" y="1014" width="868" height="1" fill="#2b2b2b"/>
<rect x="1257" y="794" width="71" height="16" fill="#7b3838"/>
<rect x="1206" y="811" width="63" height="16" fill="#7b3838"/>
<rect x="1102" y="828" width="17.5" height="16" fill="#7b3838"/>
<rect x="763" y="845" width="587" height="16" fill="#7b3838"/>
<rect x="1350" y="845" width="248" height="16" fill="#4e3737"/>
<rect x="1348.5" y="862" width="249.5" height="16" fill="#7b3838"/>
<rect x="763" y="879" width="835" height="16" fill="#978c46"/>
<rect x="1351" y="896" width="247" height="16" fill="#978c46"/>
<rect x="1351" y="913" width="247" height="16" fill="#978c46"/>
<rect x="1321.5" y="930.5" width="276" height="15" fill="#4f4b33" stroke="#8a8040" stroke-width="1"/>
<rect x="1351" y="947" width="11" height="16" fill="#978c46"/>
<rect x="1362" y="964" width="11.5" height="16" fill="#978c46"/>
<rect x="1373.5" y="981" width="11.5" height="16" fill="#978c46"/>
<rect x="1385" y="998" width="11.5" height="16" fill="#978c46"/>
<rect x="1396.5" y="1015" width="11.5" height="16" fill="#978c46"/>
<path d="M763.5 781 L758 788.5 H769Z" fill="#cfcfcf"/><rect x="763.5" y="775" width="34" height="11.5" fill="#cfcfcf" stroke="#8a8a8a" stroke-width="0.6"/>
<path d="M921 781 L915.5 788.5 H926.5Z" fill="#cfcfcf"/><rect x="921.5" y="775" width="30" height="11.5" fill="#cfcfcf" stroke="#8a8a8a" stroke-width="0.6"/>
<path d="M1356 936 L1350.5 945 H1361.5Z" fill="#cfcfcf"/><rect x="1364.5" y="932" width="69" height="11.5" fill="#d8d8d8" stroke="#8a8a8a" stroke-width="0.6"/>
<g stroke="#444" stroke-width="1"><path d="M1355 933 V945 M1358 933 V945 M1361 933 V945"/></g>
<path d="M946 759.5 H958.5 V766 L952.3 772 L946 766Z" fill="#3a93f0"/>
<rect x="951.5" y="759.5" width="1.3" height="265.5" fill="#3a93f0"/>
<path d="M1602 777 H1613 V786 L1607.5 790.5 L1602 786Z" fill="#b8b8b8"/>
<path d="M1602 801 L1606 797 H1613 V805 H1606Z" fill="none" stroke="#b8b8b8" stroke-width="1.1"/><circle cx="1606" cy="805" r="2.6" fill="#232323" stroke="#b8b8b8" stroke-width="1.1"/>
<rect x="1601" y="812" width="13" height="24" rx="6" fill="#2b2b2b"/>

</svg>
<div class="t n" style="left:59px;top:742px;font-size:15px;font-weight:bold;color:#3a93f0;transform:scaleX(1.03)">0:00:14:07</div>
<div class="t" style="left:54px;top:760px;font-size:11px;color:#2a64a8">00343 (24.00 fps)</div>
<div class="t" style="left:83px;top:780px;font-size:10px;color:#a0a0a0">#</div>
<div class="t" style="left:114px;top:780px;font-size:10.5px;color:#a8a8a8">Layer Name</div>
<div class="t" style="left:601px;top:780px;font-size:10.5px;color:#a8a8a8">Parent &amp; Link</div>
<div class="t n" style="left:1369px;top:932px;font-size:10px;color:#222">contact</div>
<div class="t n" style="left:1410px;top:932px;font-size:10px;color:#222">ion</div>
<div class="t n" style="left:771px;top:776px;font-size:10.5px;color:#222">start</div>
<div class="t n" style="left:926px;top:776px;font-size:10.5px;color:#222">psst</div>
<div class="t" style="left:91.5px;top:719px;font-size:12px;color:#c8c8c8">MAIN_SCENE</div>
<div class="t" style="left:234.5px;top:719px;font-size:12px;color:#9a9a9a">Scene_2_xray</div>
<div class="t" style="left:381.5px;top:719px;font-size:12px;color:#9a9a9a">HERO</div>
<div class="t" style="left:487px;top:719px;font-size:12px;color:#9a9a9a">GUY-1</div>
<div class="t" style="left:597px;top:719px;font-size:12px;color:#9a9a9a">track treadmill</div>
<div class="t" style="left:747px;top:719px;font-size:12px;color:#9a9a9a">GUY-2</div>
<div class="t" style="left:857px;top:719px;font-size:12px;color:#9a9a9a">01_run_cycle_8's</div>
<div class="t" style="left:1019px;top:719px;font-size:12px;color:#9a9a9a">02_run_cycle_8's</div>
<div class="t" style="left:1164px;top:719px;font-size:12px;color:#9a9a9a">Render Queue</div>
<div class="t" style="left:731px;top:756px;font-size:11px;color:#b0b0b0;width:22px;overflow:hidden;direction:rtl;line-height:1.1">0:00s</div>
<div class="t" style="left:803.2px;top:756px;font-size:11px;color:#b0b0b0">05s</div>
<div class="t" style="left:878.4px;top:756px;font-size:11px;color:#b0b0b0">10s</div>
<div class="t" style="left:953.7px;top:756px;font-size:11px;color:#b0b0b0">15s</div>
<div class="t" style="left:1028.9px;top:756px;font-size:11px;color:#b0b0b0">20s</div>
<div class="t" style="left:1104.1px;top:756px;font-size:11px;color:#b0b0b0">25s</div>
<div class="t" style="left:1179.3px;top:756px;font-size:11px;color:#b0b0b0">30s</div>
<div class="t" style="left:1254.5px;top:756px;font-size:11px;color:#b0b0b0">35s</div>
<div class="t" style="left:1329.8px;top:756px;font-size:11px;color:#b0b0b0">40s</div>
<div class="t" style="left:1405.0px;top:756px;font-size:11px;color:#b0b0b0">45s</div>
<div class="t" style="left:1480.2px;top:756px;font-size:11px;color:#b0b0b0">50s</div>
<div class="t" style="left:1555.4px;top:756px;font-size:11px;color:#b0b0b0">55s</div>
<div class="t n" style="left:82.5px;top:796px;font-size:12px;color:#a8a8a8">1</div>
<div class="t n" style="left:131px;top:796px;font-size:12px;color:#b4b4b4">[markus_enroll now_.wav]</div>
<div class="t n" style="left:627px;top:795px;font-size:12px;color:#b4b4b4;width:74px;overflow:hidden;line-height:1.25;transform:scaleX(.92)">None</div>
<div class="t n" style="left:82.5px;top:813px;font-size:12px;color:#a8a8a8">2</div>
<div class="t n" style="left:131px;top:813px;font-size:12px;color:#b4b4b4">[markus_uugh_.wav]</div>
<div class="t n" style="left:627px;top:812px;font-size:12px;color:#b4b4b4;width:74px;overflow:hidden;line-height:1.25;transform:scaleX(.92)">None</div>
<div class="t n" style="left:82.5px;top:830px;font-size:12px;color:#a8a8a8">3</div>
<div class="t n" style="left:131px;top:830px;font-size:12px;color:#b4b4b4">[comedic.mov]</div>
<div class="t n" style="left:627px;top:829px;font-size:12px;color:#b4b4b4;width:74px;overflow:hidden;line-height:1.25;transform:scaleX(.92)">None</div>
<div class="t n" style="left:82.5px;top:847px;font-size:12px;color:#a8a8a8">4</div>
<div class="t n" style="left:131px;top:847px;font-size:12px;color:#b4b4b4">[SOCA_MIX.wav]</div>
<div class="t n" style="left:627px;top:846px;font-size:12px;color:#b4b4b4;width:74px;overflow:hidden;line-height:1.25;transform:scaleX(.92)">None</div>
<div class="t n" style="left:82.5px;top:864px;font-size:12px;color:#a8a8a8">5</div>
<div class="t n" style="left:131px;top:864px;font-size:12px;color:#b4b4b4">[mds - markus_soundtrack_cut ver.wav]</div>
<div class="t n" style="left:627px;top:863px;font-size:12px;color:#b4b4b4;width:74px;overflow:hidden;line-height:1.25;transform:scaleX(.92)">None</div>
<div class="t n" style="left:82.5px;top:881px;font-size:12px;color:#a8a8a8">6</div>
<div class="t n" style="left:131px;top:881px;font-size:12px;color:#b4b4b4">position cta</div>
<div class="t n" style="left:627px;top:880px;font-size:12px;color:#b4b4b4;width:74px;overflow:hidden;line-height:1.25;transform:scaleX(.92)">None</div>
<div class="t n" style="left:510px;top:896px;font-size:14px;font-style:italic;font-family:'Liberation Serif';color:#a8a8a8">fx</div>
<div class="t n" style="left:82.5px;top:898px;font-size:12px;color:#a8a8a8">7</div>
<div class="t n" style="left:131px;top:898px;font-size:12px;color:#b4b4b4">MOTIONDESIGN.SCHOOL</div>
<div class="t n" style="left:627px;top:897px;font-size:12px;color:#b4b4b4;width:74px;overflow:hidden;line-height:1.25;transform:scaleX(.92)">6. position cta</div>
<div class="t n" style="left:82.5px;top:915px;font-size:12px;color:#a8a8a8">8</div>
<div class="t n" style="left:131px;top:915px;font-size:12px;color:#b4b4b4">shadow</div>
<div class="t n" style="left:627px;top:914px;font-size:12px;color:#b4b4b4;width:74px;overflow:hidden;line-height:1.25;transform:scaleX(.92)">6. position cta</div>
<div class="t n" style="left:82.5px;top:932px;font-size:12px;color:#a8a8a8">9</div>
<div class="t n" style="left:131px;top:932px;font-size:12px;color:#b4b4b4">[01_run_cycle_8's 2]</div>
<div class="t n" style="left:627px;top:931px;font-size:12px;color:#b4b4b4;width:74px;overflow:hidden;line-height:1.25;transform:scaleX(.92)">6. position cta</div>
<div class="t n" style="left:82.5px;top:949px;font-size:12px;color:#a8a8a8">10</div>
<div class="t n" style="left:131px;top:949px;font-size:12px;color:#b4b4b4">[run cycle.mov]</div>
<div class="t n" style="left:627px;top:948px;font-size:12px;color:#b4b4b4;width:74px;overflow:hidden;line-height:1.25;transform:scaleX(.92)">6. position cta</div>
<div class="t n" style="left:82.5px;top:966px;font-size:12px;color:#a8a8a8">11</div>
<div class="t n" style="left:131px;top:966px;font-size:12px;color:#b4b4b4">[run cycle.mov]</div>
<div class="t n" style="left:627px;top:965px;font-size:12px;color:#b4b4b4;width:74px;overflow:hidden;line-height:1.25;transform:scaleX(.92)">6. position cta</div>
<div class="t n" style="left:82.5px;top:983px;font-size:12px;color:#a8a8a8">12</div>
<div class="t n" style="left:131px;top:983px;font-size:12px;color:#b4b4b4">[run cycle.mov]</div>
<div class="t n" style="left:627px;top:982px;font-size:12px;color:#b4b4b4;width:74px;overflow:hidden;line-height:1.25;transform:scaleX(.92)">6. position cta</div>
<div class="t n" style="left:82.5px;top:1000px;font-size:12px;color:#a8a8a8">13</div>
<div class="t n" style="left:131px;top:1000px;font-size:12px;color:#b4b4b4">[run cycle.mov]</div>
<div class="t n" style="left:627px;top:999px;font-size:12px;color:#b4b4b4;width:74px;overflow:hidden;line-height:1.25;transform:scaleX(.92)">6. position cta</div>
<div class="t n" style="left:82.5px;top:1017px;font-size:12px;color:#a8a8a8">14</div>
<div class="t n" style="left:131px;top:1017px;font-size:12px;color:#b4b4b4">[run cycle.mov]</div>
<div class="t n" style="left:627px;top:1016px;font-size:12px;color:#b4b4b4;width:74px;overflow:hidden;line-height:1.25;transform:scaleX(.92)">6. position cta</div>
<svg class="a" style="left:0;top:0" width="1656" height="1074">
<rect x="42" y="1025" width="1575" height="19" fill="#1e1e1e"/>
<rect x="42" y="1025" width="1556" height="1" fill="#111"/>
<g stroke="#3a93f0" stroke-width="1.1" fill="none"><path d="M50 1029 H58 V1037 H50Z M53 1032 H61 V1040 H53Z"/></g>
<g stroke="#b8b8b8" stroke-width="1.1" fill="none"><path d="M68 1029 H75 V1036 H68Z"/><circle cx="75" cy="1036" r="3.5"/><path d="M86 1029 L90 1033 L86 1037 M96 1029 L92 1033 L96 1037 M90 1028 V1040 M92 1028 V1040"/></g>
<rect x="462" y="1026" width="132" height="18" fill="#1a1a1a"/>
<path d="M736 1037 L740.5 1033 L745 1037Z" fill="#b8b8b8"/>
<path d="M766 1034.5 H804" stroke="#555" stroke-width="1"/><circle cx="763" cy="1034.5" r="4" fill="#1e1e1e" stroke="#b8b8b8" stroke-width="1.3"/>
<path d="M816 1038 L821 1032 L824 1035 L827 1030 L832 1038Z" fill="#c8c8c8"/>
<rect x="839" y="1027" width="729" height="13" rx="6.5" fill="#2b2b2b"/>
</svg>
<div class="t" style="left:467px;top:1029px;font-size:12px;color:#a0a0a0">Toggle Switches / Modes</div>
</body></html>
